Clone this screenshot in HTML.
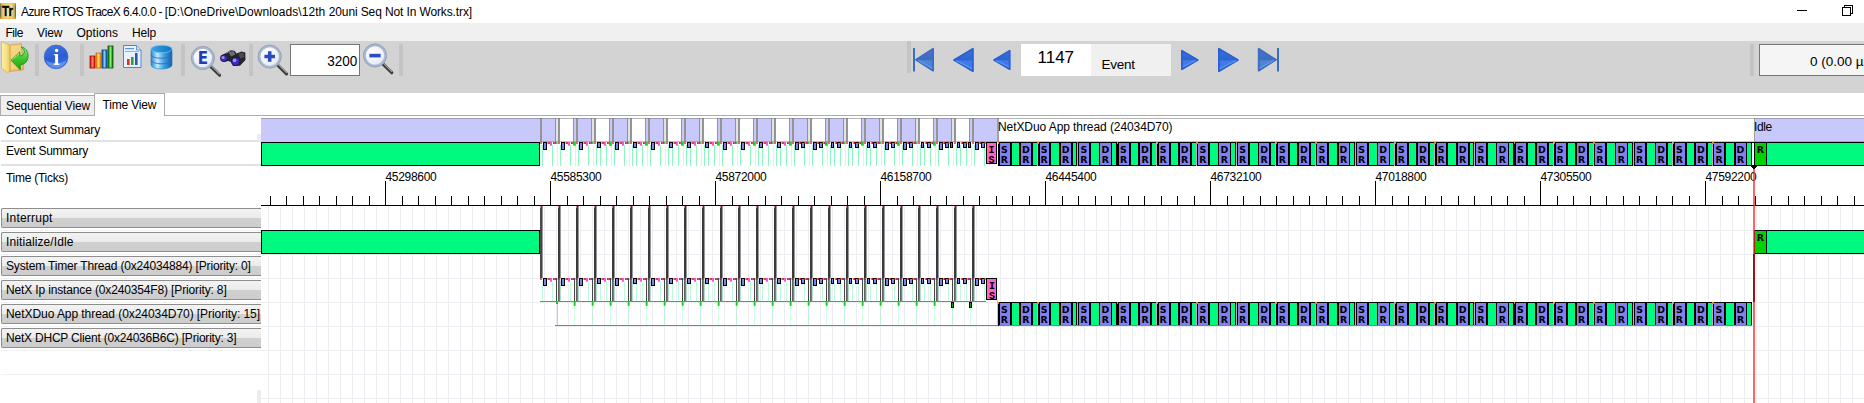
<!DOCTYPE html>
<html><head><meta charset="utf-8"><title>Azure RTOS TraceX</title>
<style>
html,body{margin:0;padding:0;background:#fff;overflow:hidden}
body{width:1864px;height:403px;position:relative;font-family:"Liberation Sans",sans-serif;font-size:12px;color:#000}
.abs{position:absolute;white-space:nowrap}
#title{left:21px;top:5px;line-height:15px}
#ticon{left:0;top:3px;width:16px;height:16px;background:linear-gradient(180deg,rgba(250,185,40,.75) 0,rgba(255,255,255,0) 22%,rgba(255,255,255,0) 80%,rgba(250,170,30,.8) 100%),linear-gradient(90deg,#4e4a3a 0,#bdb06a 10%,#f1eab2 28%,#eee6a8 72%,#c2ad5c 90%,#55503a 100%);overflow:hidden}
#ticon span{position:absolute;left:1.800px;top:0;font:bold 14px "Liberation Sans",sans-serif;letter-spacing:0;line-height:16px;transform:scaleX(.84);transform-origin:0 0;-webkit-text-stroke:.35px #000}
#menubar{left:0;top:23px;width:1864px;height:18px;background:#f0f0f0}
#menubar span{position:absolute;top:3px;line-height:15px}
#toolbar{left:0;top:41px;width:1864px;height:52px;background:#d3d3d3}
.tbox{position:absolute;box-sizing:border-box;top:44px;height:32px}
#zoombox{left:290px;width:70px;background:#fff;border:1px solid #767676}
#zoombox span{position:absolute;right:2px;top:7px;font-size:15px;line-height:17px;transform:scaleX(.9);transform-origin:100% 50%}
#evnum{left:1021px;width:70px;background:#fff}
#evnum span{position:absolute;left:16.500px;top:3.800px;font-size:17px;line-height:20px}
#evlab{left:1091px;width:80px;background:#f0f0f0}
#evlab span{position:absolute;left:10.500px;top:13.400px;font-size:13.500px;line-height:16px}
#rbox{left:1759px;width:120px;background:#f5f5f5;border:1px solid #767676}
#rbox span{position:absolute;left:50px;top:8.500px;font-size:13.500px;line-height:16px}
#tabline{left:0;top:115px;width:1864px;height:1px;background:#acacac}
#tab1{left:0;top:95px;width:95px;height:21px;box-sizing:border-box;background:#efefef;border:1px solid #acacac}
#tab1 span{position:absolute;left:5px;top:3px;line-height:15px}
#tab2{left:94px;top:93px;width:71px;height:23px;box-sizing:border-box;background:#fff;border:1px solid #acacac;border-bottom:none}
#tab2 span{position:absolute;left:7.500px;top:4px;line-height:15px}
.lbl{left:6px;line-height:15px}
.sep{left:1px;width:260px;height:2px;background:#e2e2e2}
.btn{position:absolute;left:1px;width:260px;height:20px;box-sizing:border-box;border:1px solid #8e8e8e;border-right:none;border-radius:2px 0 0 2px;
 background:linear-gradient(#f3f3f3 0,#ebebeb 50%,#d0d0d0 50%,#cdcdcd 100%);overflow:hidden;white-space:nowrap}
.btn span{position:absolute;left:4px;top:1.500px;line-height:15px}
.faint{left:1px;width:260px;height:1px;background:#f1f1f1}
#chart{position:absolute;left:0;top:0}
#ttl{letter-spacing:0}#tt1{letter-spacing:-0.569px}#tt2{letter-spacing:0.069px}#tt3{letter-spacing:-0.119px}#m0{letter-spacing:-0.5px}#m1{letter-spacing:-0.15px}#m2{letter-spacing:0.03px}#m3{letter-spacing:-0.15px}#t1{letter-spacing:-0.12px}#t2{letter-spacing:-0.18px}#l0{letter-spacing:-0.135px}#l1{letter-spacing:-0.26px}#l2{letter-spacing:-0.26px}#b0{letter-spacing:0.21px}#b1{letter-spacing:0.1px}#b2{letter-spacing:-0.17px}#b3{letter-spacing:-0.144px}#b4{letter-spacing:-0.061px}#b5{letter-spacing:-0.205px}#evlab span{letter-spacing:-0.25px}
</style></head><body>
<div class="abs" id="ticon"><span>Tr</span></div>
<div class="abs" id="title"><span id="ttl"><span id="tt1">Azure RTOS TraceX 6.4.0.0 - </span><span id="tt2">[D:\OneDrive\Downloads\12th </span><span id="tt3">20uni Seq Not In Works.trx]</span></span></div>
<svg class="abs" style="left:1790px;top:0" width="74" height="23" viewBox="1790 0 74 23" shape-rendering="crispEdges"><rect x="1797" y="10" width="10" height="1" fill="#000"/><path d="M1842.500 7.500h8v8h-8z M1844.500 7.500v-2h8v8h-2" fill="none" stroke="#000" stroke-width="1"/></svg>
<div class="abs" id="menubar"><span style="left:5.500px" id="m0">File</span><span style="left:37px" id="m1">View</span><span style="left:76.500px" id="m2">Options</span><span style="left:132px" id="m3">Help</span></div>
<div class="abs" id="toolbar"></div>

<svg id="icons" width="1864" height="52" viewBox="0 41 1864 52" style="position:absolute;left:0;top:41px">
<defs>
<linearGradient id="gFold" x1="0" y1="0" x2="1" y2="0"><stop offset="0" stop-color="#fdf2a6"/><stop offset=".6" stop-color="#f6df84"/><stop offset="1" stop-color="#e9c868"/></linearGradient>
<linearGradient id="gFold2" x1="0" y1="0" x2="1" y2="1"><stop offset="0" stop-color="#fad47c"/><stop offset="1" stop-color="#e4b054"/></linearGradient>
<linearGradient id="gArrow" x1="0" y1="0" x2="0" y2="1"><stop offset="0" stop-color="#9aec74"/><stop offset=".55" stop-color="#3cc42c"/><stop offset="1" stop-color="#1aa012"/></linearGradient>
<linearGradient id="gInfo" x1=".3" y1="0" x2=".6" y2="1"><stop offset="0" stop-color="#4274de"/><stop offset=".55" stop-color="#2b5bd2"/><stop offset="1" stop-color="#3a70e4"/></linearGradient>
<linearGradient id="gRed" x1="0" y1="0" x2="1" y2="0"><stop offset="0" stop-color="#c81010"/><stop offset=".5" stop-color="#ff7a5a"/><stop offset="1" stop-color="#c81010"/></linearGradient>
<linearGradient id="gOr" x1="0" y1="0" x2="1" y2="0"><stop offset="0" stop-color="#e87800"/><stop offset=".5" stop-color="#ffd870"/><stop offset="1" stop-color="#e87800"/></linearGradient>
<linearGradient id="gBl" x1="0" y1="0" x2="1" y2="0"><stop offset="0" stop-color="#0a4a9a"/><stop offset=".5" stop-color="#7ccaf5"/><stop offset="1" stop-color="#0a4a9a"/></linearGradient>
<linearGradient id="gGr" x1="0" y1="0" x2="1" y2="0"><stop offset="0" stop-color="#0a6a0a"/><stop offset=".5" stop-color="#7ff070"/><stop offset="1" stop-color="#0a6a0a"/></linearGradient>
<linearGradient id="gDb" x1="0" y1="0" x2="1" y2="0"><stop offset="0" stop-color="#1c8ad2"/><stop offset=".3" stop-color="#bdecff"/><stop offset=".6" stop-color="#3ea6e6"/><stop offset="1" stop-color="#0a62b2"/></linearGradient><linearGradient id="gDbTop" x1="0" y1="0" x2="1" y2="0"><stop offset="0" stop-color="#3aa4e4"/><stop offset="1" stop-color="#0f74c4"/></linearGradient>
<radialGradient id="gLens" cx=".4" cy=".35" r=".75"><stop offset="0" stop-color="#ffffff"/><stop offset=".7" stop-color="#e9eef8"/><stop offset="1" stop-color="#c9d6ea"/></radialGradient>
<linearGradient id="gNav" x1="0" y1="0" x2="0" y2="1"><stop offset="0" stop-color="#3a72dc"/><stop offset=".48" stop-color="#2c64d6"/><stop offset=".56" stop-color="#3f7ce6"/><stop offset="1" stop-color="#3a76e2"/></linearGradient>
<linearGradient id="gNav2" x1="0" y1="0" x2="0" y2="1"><stop offset="0" stop-color="#4a78c8"/><stop offset=".48" stop-color="#3d6cc0"/><stop offset=".56" stop-color="#4f84d6"/><stop offset="1" stop-color="#4a80d2"/></linearGradient>
<g id="mag">
 <path d="M7.500 8 L16.800 17.200" stroke="#3c3c40" stroke-width="3.200" stroke-linecap="round"/>
 <path d="M8.300 7.600 L16.800 16" stroke="#a4a4a8" stroke-width="1.100" stroke-linecap="round"/>
 <circle cx="0" cy="0" r="10.5" fill="url(#gLens)" stroke="#a9b8cf" stroke-width="2.4"/>
 <circle cx="0" cy="0" r="11.6" fill="none" stroke="#8b97aa" stroke-width=".7"/>
</g>
</defs>
<!-- separators -->
<g fill="#c4c4c4">
<rect x="35" y="44" width="4" height="32"/><rect x="80" y="44" width="4" height="32"/><rect x="181" y="44" width="4" height="32"/>
<rect x="249" y="44" width="4" height="32"/><rect x="399" y="44" width="4" height="32"/><rect x="907" y="41" width="4" height="32"/><rect x="1750" y="44" width="4" height="32"/>
</g>
<!-- folder -->
<path d="M9.900 45 L21.500 43.500 L23.800 69.800 L9.900 71.500 Z" fill="url(#gFold2)" stroke="#c79a3e" stroke-width=".6"/>
<path d="M11 46.500 L20.600 45.300 L22 68 L11 69.400 Z" fill="#f7d98a" opacity=".7"/>
<path d="M1.500 41.600 L9.900 45 L9.900 71.300 L7.400 72.900 L1.500 67.800 Z" fill="url(#gFold)" stroke="#c9a548" stroke-width=".6"/>
<path d="M11.100 60.300 L19.850 51.900 L19.850 55.900 C22.500 56 24.600 54 24.300 51 C24.100 49.800 23.300 48.900 22.300 48.400 L21.300 47 C25 47.300 28.100 51 28.100 55.900 C28.100 61 25 64.300 20.300 64.800 L20.300 69.800 Z" fill="url(#gArrow)" stroke="#128c0c" stroke-width=".8" stroke-linejoin="round"/>
<path d="M12.500 59.700 L19.300 53.200" stroke="#eaffe2" stroke-width=".9" stroke-dasharray="1.200 .700" fill="none"/>
<!-- info -->
<circle cx="56.100" cy="56.900" r="11.900" fill="url(#gInfo)" stroke="#3a66d0" stroke-width=".7"/>
<path d="M45.500 60 A11 11 0 0 0 66.700 60 A14 9 0 0 1 45.500 60Z" fill="#7fb0ff" opacity=".55"/>
<circle cx="56.600" cy="50.400" r="1.750" fill="#fff"/>
<path d="M53.900 53.900h4.200v9.700h1.200v1.300h-5.500v-1.300h1.300v-8.300h-1.200z" fill="#fff"/>
<!-- bar chart -->
<rect x="90" y="56" width="5" height="12" fill="url(#gRed)" stroke="#a00808" stroke-width=".8"/>
<rect x="96" y="53" width="5" height="15" fill="url(#gOr)" stroke="#d06800" stroke-width=".8"/>
<rect x="102" y="50" width="5" height="18" fill="url(#gBl)" stroke="#083a80" stroke-width=".8"/>
<rect x="108" y="46" width="5" height="22" fill="url(#gGr)" stroke="#065006" stroke-width=".8"/>
<!-- doc -->
<path d="M123.5 45.5h13l4.5 4.5v17.5h-17.5z" fill="#e8f2ff" stroke="#4a86d8" stroke-width="1"/>
<path d="M136.5 45.5v4.5h4.5" fill="#cfe2fa" stroke="#4a86d8" stroke-width=".8"/>
<rect x="125" y="48" width="9" height="1.2" fill="#5a96e0"/><rect x="125" y="51" width="14" height="1" fill="#8ab6ee"/>
<rect x="127" y="59" width="2.6" height="6" fill="#e03020"/><rect x="131" y="57" width="2.6" height="8" fill="#30a030"/><rect x="135" y="53" width="2.6" height="12" fill="#2a5ab0"/>
<!-- database -->
<path d="M151 49 v16 a10.500 4 0 0 0 21 0 v-16z" fill="url(#gDb)" stroke="#1f78c0" stroke-width=".6"/>
<ellipse cx="161.500" cy="49" rx="10.500" ry="3.800" fill="url(#gDbTop)" stroke="#7cc8f2" stroke-width=".7"/>
<path d="M151 54.500 a10.500 3.800 0 0 0 21 0" fill="none" stroke="#5a5ab0" stroke-width=".9"/>
<path d="M151 60 a10.500 3.800 0 0 0 21 0" fill="none" stroke="#5a5ab0" stroke-width=".9"/>
<!-- magnifier E -->
<use href="#mag" x="202.800" y="58"/>
<text transform="translate(202.900 64.300) scale(.86 1)" text-anchor="middle" style="font:bold 17.600px 'DejaVu Sans','Liberation Sans',sans-serif;fill:#1f3cb4">E</text>
<!-- binoculars -->
<path d="M221.500 55.500 L230.500 50.300 L234.500 50.800 L236.500 53.500 L241.500 51.500 L245.300 52.500 L245.500 60 L240 65.800 L233 66 L231 62 L228 61 L224 62 L221 60 Z" fill="#26262a"/>
<path d="M228.500 52 L233.500 51 L235.500 54.500 L231 56.500 Z" fill="#6a6a72"/>
<path d="M238.500 53.500 L243.500 52.500 L244.500 57 L240 58.500 Z" fill="#4a4a52"/>
<path d="M226 53.300 L230.500 50.600" stroke="#9a9aa2" stroke-width=".8"/>
<circle cx="223.900" cy="58.200" r="3.500" fill="#3a2cb8" stroke="#15103a" stroke-width=".7"/><circle cx="223.100" cy="57.400" r="1.500" fill="#9a92f4"/>
<circle cx="235.600" cy="61.400" r="4.200" fill="#3a2cb8" stroke="#15103a" stroke-width=".7"/><circle cx="234.600" cy="60.400" r="1.800" fill="#9a92f4"/>
<!-- magnifier + -->
<use href="#mag" x="269.700" y="56.600"/>
<path d="M264.400 54.700h3.500v-3.500h3.600v3.500h3.500v3.600h-3.500v3.500h-3.600v-3.500h-3.500z" fill="#2a4cc0"/>
<!-- magnifier - -->
<use href="#mag" x="375" y="55.500"/>
<rect x="369.400" y="53.800" width="11.200" height="3.600" fill="#2a4cc0"/>
<!-- nav buttons -->
<rect x="913" y="48" width="2" height="23.500" fill="#3a6cc4"/>
<path d="M916.000 59.750 L933.100 48.800 V70.700 Z" fill="url(#gNav2)" stroke="#3c6cc2" stroke-width="1.800" stroke-linejoin="round"/><path d="M918.500 60.550 L931.800 68.000" stroke="#7fb4ff" stroke-width="1.200" stroke-linecap="round" opacity=".55"/>
<path d="M954.000 60.000 L972.900 48.800 V71.200 Z" fill="url(#gNav)" stroke="#2a60d2" stroke-width="1.800" stroke-linejoin="round"/><path d="M956.500 60.800 L971.600 68.500" stroke="#7fb4ff" stroke-width="1.200" stroke-linecap="round" opacity=".55"/>
<path d="M994.000 60.000 L1009.700 50.800 V69.200 Z" fill="url(#gNav)" stroke="#2a60d2" stroke-width="1.800" stroke-linejoin="round"/><path d="M996.500 60.800 L1008.400 66.500" stroke="#7fb4ff" stroke-width="1.200" stroke-linecap="round" opacity=".55"/>
<path d="M1197.800 60.000 L1181.900 50.800 V69.200 Z" fill="url(#gNav)" stroke="#2a60d2" stroke-width="1.800" stroke-linejoin="round"/><path d="M1195.300 60.800 L1183.200 66.500" stroke="#7fb4ff" stroke-width="1.200" stroke-linecap="round" opacity=".55"/>
<path d="M1238.000 60.000 L1218.900 48.800 V71.200 Z" fill="url(#gNav)" stroke="#2a60d2" stroke-width="1.800" stroke-linejoin="round"/><path d="M1235.500 60.800 L1220.200 68.500" stroke="#7fb4ff" stroke-width="1.200" stroke-linecap="round" opacity=".55"/>
<path d="M1276.000 59.750 L1258.700 48.800 V70.700 Z" fill="url(#gNav2)" stroke="#3c6cc2" stroke-width="1.800" stroke-linejoin="round"/><path d="M1273.500 60.550 L1260.000 68.000" stroke="#7fb4ff" stroke-width="1.200" stroke-linecap="round" opacity=".55"/>
<rect x="1277" y="48" width="2" height="23.500" fill="#3a6cc4"/>
</svg>

<div class="tbox" id="zoombox"><span>3200</span></div>
<div class="tbox" id="evnum"><span>1147</span></div>
<div class="tbox" id="evlab"><span>Event</span></div>
<div class="tbox" id="rbox"><span>0 (0.00 µs)</span></div>
<div class="abs" id="tabline"></div>
<div class="abs" id="tab1"><span id="t1">Sequential View</span></div>
<div class="abs" id="tab2"><span id="t2">Time View</span></div>
<div class="abs lbl" style="top:123px"><span id="l0">Context Summary</span></div>
<div class="abs sep" style="top:140px"></div>
<div class="abs lbl" style="top:144px"><span id="l1">Event Summary</span></div>
<div class="abs sep" style="top:164px"></div>
<div class="abs lbl" style="top:171px"><span id="l2">Time (Ticks)</span></div>
<div class="abs faint" style="top:230px"></div><div class="abs faint" style="top:254px"></div><div class="abs faint" style="top:278px"></div>
<div class="abs faint" style="top:302px"></div><div class="abs faint" style="top:326px"></div><div class="abs faint" style="top:350px"></div><div class="abs faint" style="top:374px"></div>
<div class="btn" style="top:208px"><span id="b0">Interrupt</span></div><div class="btn" style="top:232px"><span id="b1">Initialize/Idle</span></div><div class="btn" style="top:256px"><span id="b2">System Timer Thread (0x24034884) [Priority: 0]</span></div><div class="btn" style="top:280px"><span id="b3">NetX Ip instance (0x240354F8) [Priority: 8]</span></div><div class="btn" style="top:304px"><span id="b4">NetXDuo App thread (0x24034D70) [Priority: 15]</span></div><div class="btn" style="top:328px"><span id="b5">NetX DHCP Client (0x24036B6C) [Priority: 3]</span></div>
<div class="abs" style="left:257px;top:134px;width:4px;height:7px;background:#ececec"></div>
<div class="abs" style="left:257px;top:390px;width:4px;height:13px;background:#ececec"></div>
<svg id="chart" width="1864" height="403" viewBox="0 0 1864 403" shape-rendering="crispEdges">
<defs><clipPath id="cpA"><rect x="986" y="142" width="11" height="21"/></clipPath><clipPath id="cpB"><rect x="986" y="278" width="12" height="21"/></clipPath></defs>
<style>
.bl{font:bold 9.4px "DejaVu Sans","Liberation Sans",sans-serif;text-anchor:middle;fill:#000}
.bm{font:bold 10px "Liberation Mono","DejaVu Sans Mono",monospace;text-anchor:middle;fill:#000}
.rl{font:12px "Liberation Sans",sans-serif;letter-spacing:-0.3px;fill:#000}
.cl{font:12px "Liberation Sans",sans-serif;fill:#000}
</style>
<g><rect x="268" y="206" width="1" height="197" fill="#ecedf0"/><rect x="280" y="206" width="1" height="197" fill="#ecedf0"/><rect x="292" y="206" width="1" height="197" fill="#ecedf0"/><rect x="304" y="206" width="1" height="197" fill="#ecedf0"/><rect x="316" y="206" width="1" height="197" fill="#ecedf0"/><rect x="328" y="206" width="1" height="197" fill="#ecedf0"/><rect x="340" y="206" width="1" height="197" fill="#ecedf0"/><rect x="352" y="206" width="1" height="197" fill="#ecedf0"/><rect x="364" y="206" width="1" height="197" fill="#ecedf0"/><rect x="376" y="206" width="1" height="197" fill="#ecedf0"/><rect x="388" y="206" width="1" height="197" fill="#ecedf0"/><rect x="400" y="206" width="1" height="197" fill="#ecedf0"/><rect x="412" y="206" width="1" height="197" fill="#ecedf0"/><rect x="424" y="206" width="1" height="197" fill="#ecedf0"/><rect x="436" y="206" width="1" height="197" fill="#ecedf0"/><rect x="448" y="206" width="1" height="197" fill="#ecedf0"/><rect x="460" y="206" width="1" height="197" fill="#ecedf0"/><rect x="472" y="206" width="1" height="197" fill="#ecedf0"/><rect x="484" y="206" width="1" height="197" fill="#ecedf0"/><rect x="496" y="206" width="1" height="197" fill="#ecedf0"/><rect x="508" y="206" width="1" height="197" fill="#ecedf0"/><rect x="520" y="206" width="1" height="197" fill="#ecedf0"/><rect x="532" y="206" width="1" height="197" fill="#ecedf0"/><rect x="544" y="206" width="1" height="197" fill="#ecedf0"/><rect x="556" y="206" width="1" height="197" fill="#ecedf0"/><rect x="568" y="206" width="1" height="197" fill="#ecedf0"/><rect x="580" y="206" width="1" height="197" fill="#ecedf0"/><rect x="592" y="206" width="1" height="197" fill="#ecedf0"/><rect x="604" y="206" width="1" height="197" fill="#ecedf0"/><rect x="616" y="206" width="1" height="197" fill="#ecedf0"/><rect x="628" y="206" width="1" height="197" fill="#ecedf0"/><rect x="640" y="206" width="1" height="197" fill="#ecedf0"/><rect x="652" y="206" width="1" height="197" fill="#ecedf0"/><rect x="664" y="206" width="1" height="197" fill="#ecedf0"/><rect x="676" y="206" width="1" height="197" fill="#ecedf0"/><rect x="688" y="206" width="1" height="197" fill="#ecedf0"/><rect x="700" y="206" width="1" height="197" fill="#ecedf0"/><rect x="712" y="206" width="1" height="197" fill="#ecedf0"/><rect x="724" y="206" width="1" height="197" fill="#ecedf0"/><rect x="736" y="206" width="1" height="197" fill="#ecedf0"/><rect x="748" y="206" width="1" height="197" fill="#ecedf0"/><rect x="760" y="206" width="1" height="197" fill="#ecedf0"/><rect x="772" y="206" width="1" height="197" fill="#ecedf0"/><rect x="784" y="206" width="1" height="197" fill="#ecedf0"/><rect x="796" y="206" width="1" height="197" fill="#ecedf0"/><rect x="808" y="206" width="1" height="197" fill="#ecedf0"/><rect x="820" y="206" width="1" height="197" fill="#ecedf0"/><rect x="832" y="206" width="1" height="197" fill="#ecedf0"/><rect x="844" y="206" width="1" height="197" fill="#ecedf0"/><rect x="856" y="206" width="1" height="197" fill="#ecedf0"/><rect x="868" y="206" width="1" height="197" fill="#ecedf0"/><rect x="880" y="206" width="1" height="197" fill="#ecedf0"/><rect x="892" y="206" width="1" height="197" fill="#ecedf0"/><rect x="904" y="206" width="1" height="197" fill="#ecedf0"/><rect x="916" y="206" width="1" height="197" fill="#ecedf0"/><rect x="928" y="206" width="1" height="197" fill="#ecedf0"/><rect x="940" y="206" width="1" height="197" fill="#ecedf0"/><rect x="952" y="206" width="1" height="197" fill="#ecedf0"/><rect x="964" y="206" width="1" height="197" fill="#ecedf0"/><rect x="976" y="206" width="1" height="197" fill="#ecedf0"/><rect x="988" y="206" width="1" height="197" fill="#ecedf0"/><rect x="1000" y="206" width="1" height="197" fill="#ecedf0"/><rect x="1012" y="206" width="1" height="197" fill="#ecedf0"/><rect x="1024" y="206" width="1" height="197" fill="#ecedf0"/><rect x="1036" y="206" width="1" height="197" fill="#ecedf0"/><rect x="1048" y="206" width="1" height="197" fill="#ecedf0"/><rect x="1060" y="206" width="1" height="197" fill="#ecedf0"/><rect x="1072" y="206" width="1" height="197" fill="#ecedf0"/><rect x="1084" y="206" width="1" height="197" fill="#ecedf0"/><rect x="1096" y="206" width="1" height="197" fill="#ecedf0"/><rect x="1108" y="206" width="1" height="197" fill="#ecedf0"/><rect x="1120" y="206" width="1" height="197" fill="#ecedf0"/><rect x="1132" y="206" width="1" height="197" fill="#ecedf0"/><rect x="1144" y="206" width="1" height="197" fill="#ecedf0"/><rect x="1156" y="206" width="1" height="197" fill="#ecedf0"/><rect x="1168" y="206" width="1" height="197" fill="#ecedf0"/><rect x="1180" y="206" width="1" height="197" fill="#ecedf0"/><rect x="1192" y="206" width="1" height="197" fill="#ecedf0"/><rect x="1204" y="206" width="1" height="197" fill="#ecedf0"/><rect x="1216" y="206" width="1" height="197" fill="#ecedf0"/><rect x="1228" y="206" width="1" height="197" fill="#ecedf0"/><rect x="1240" y="206" width="1" height="197" fill="#ecedf0"/><rect x="1252" y="206" width="1" height="197" fill="#ecedf0"/><rect x="1264" y="206" width="1" height="197" fill="#ecedf0"/><rect x="1276" y="206" width="1" height="197" fill="#ecedf0"/><rect x="1288" y="206" width="1" height="197" fill="#ecedf0"/><rect x="1300" y="206" width="1" height="197" fill="#ecedf0"/><rect x="1312" y="206" width="1" height="197" fill="#ecedf0"/><rect x="1324" y="206" width="1" height="197" fill="#ecedf0"/><rect x="1336" y="206" width="1" height="197" fill="#ecedf0"/><rect x="1348" y="206" width="1" height="197" fill="#ecedf0"/><rect x="1360" y="206" width="1" height="197" fill="#ecedf0"/><rect x="1372" y="206" width="1" height="197" fill="#ecedf0"/><rect x="1384" y="206" width="1" height="197" fill="#ecedf0"/><rect x="1396" y="206" width="1" height="197" fill="#ecedf0"/><rect x="1408" y="206" width="1" height="197" fill="#ecedf0"/><rect x="1420" y="206" width="1" height="197" fill="#ecedf0"/><rect x="1432" y="206" width="1" height="197" fill="#ecedf0"/><rect x="1444" y="206" width="1" height="197" fill="#ecedf0"/><rect x="1456" y="206" width="1" height="197" fill="#ecedf0"/><rect x="1468" y="206" width="1" height="197" fill="#ecedf0"/><rect x="1480" y="206" width="1" height="197" fill="#ecedf0"/><rect x="1492" y="206" width="1" height="197" fill="#ecedf0"/><rect x="1504" y="206" width="1" height="197" fill="#ecedf0"/><rect x="1516" y="206" width="1" height="197" fill="#ecedf0"/><rect x="1528" y="206" width="1" height="197" fill="#ecedf0"/><rect x="1540" y="206" width="1" height="197" fill="#ecedf0"/><rect x="1552" y="206" width="1" height="197" fill="#ecedf0"/><rect x="1564" y="206" width="1" height="197" fill="#ecedf0"/><rect x="1576" y="206" width="1" height="197" fill="#ecedf0"/><rect x="1588" y="206" width="1" height="197" fill="#ecedf0"/><rect x="1600" y="206" width="1" height="197" fill="#ecedf0"/><rect x="1612" y="206" width="1" height="197" fill="#ecedf0"/><rect x="1624" y="206" width="1" height="197" fill="#ecedf0"/><rect x="1636" y="206" width="1" height="197" fill="#ecedf0"/><rect x="1648" y="206" width="1" height="197" fill="#ecedf0"/><rect x="1660" y="206" width="1" height="197" fill="#ecedf0"/><rect x="1672" y="206" width="1" height="197" fill="#ecedf0"/><rect x="1684" y="206" width="1" height="197" fill="#ecedf0"/><rect x="1696" y="206" width="1" height="197" fill="#ecedf0"/><rect x="1708" y="206" width="1" height="197" fill="#ecedf0"/><rect x="1720" y="206" width="1" height="197" fill="#ecedf0"/><rect x="1732" y="206" width="1" height="197" fill="#ecedf0"/><rect x="1744" y="206" width="1" height="197" fill="#ecedf0"/><rect x="1756" y="206" width="1" height="197" fill="#ecedf0"/><rect x="1768" y="206" width="1" height="197" fill="#ecedf0"/><rect x="1780" y="206" width="1" height="197" fill="#ecedf0"/><rect x="1792" y="206" width="1" height="197" fill="#ecedf0"/><rect x="1804" y="206" width="1" height="197" fill="#ecedf0"/><rect x="1816" y="206" width="1" height="197" fill="#ecedf0"/><rect x="1828" y="206" width="1" height="197" fill="#ecedf0"/><rect x="1840" y="206" width="1" height="197" fill="#ecedf0"/><rect x="1852" y="206" width="1" height="197" fill="#ecedf0"/><rect x="261" y="230" width="1603" height="1" fill="#ecedf0"/><rect x="261" y="254" width="1603" height="1" fill="#ecedf0"/><rect x="261" y="278" width="1603" height="1" fill="#ecedf0"/><rect x="261" y="302" width="1603" height="1" fill="#ecedf0"/><rect x="261" y="326" width="1603" height="1" fill="#ecedf0"/><rect x="261" y="350" width="1603" height="1" fill="#ecedf0"/><rect x="261" y="374" width="1603" height="1" fill="#ecedf0"/><rect x="261" y="398" width="1603" height="1" fill="#ecedf0"/></g><g><rect x="261" y="118" width="279" height="24" fill="#c8c8fa"/><rect x="540" y="118" width="1.7" height="24" fill="#949494"/><rect x="541.7" y="118" width="13.7" height="24" fill="#c8c8fa"/><rect x="555.4" y="118" width="0.9" height="24" fill="#949494"/><rect x="556.3" y="118" width="2" height="24" fill="#e2e2e2"/><rect x="558.3" y="118" width="1.5" height="24" fill="#949494"/><rect x="573" y="118" width="0.9" height="24" fill="#949494"/><rect x="573.9" y="118" width="2.1" height="24" fill="#c8c8fa"/><rect x="576" y="118" width="1.7" height="24" fill="#949494"/><rect x="577.7" y="118" width="13.7" height="24" fill="#c8c8fa"/><rect x="591.4" y="118" width="0.9" height="24" fill="#949494"/><rect x="592.3" y="118" width="2" height="24" fill="#e2e2e2"/><rect x="594.3" y="118" width="1.5" height="24" fill="#949494"/><rect x="609" y="118" width="0.9" height="24" fill="#949494"/><rect x="609.9" y="118" width="2.1" height="24" fill="#c8c8fa"/><rect x="612" y="118" width="1.7" height="24" fill="#949494"/><rect x="613.7" y="118" width="13.7" height="24" fill="#c8c8fa"/><rect x="627.4" y="118" width="0.9" height="24" fill="#949494"/><rect x="628.3" y="118" width="2" height="24" fill="#e2e2e2"/><rect x="630.3" y="118" width="1.5" height="24" fill="#949494"/><rect x="645" y="118" width="0.9" height="24" fill="#949494"/><rect x="645.9" y="118" width="2.1" height="24" fill="#c8c8fa"/><rect x="648" y="118" width="1.7" height="24" fill="#949494"/><rect x="649.7" y="118" width="13.7" height="24" fill="#c8c8fa"/><rect x="663.4" y="118" width="0.9" height="24" fill="#949494"/><rect x="664.3" y="118" width="2" height="24" fill="#e2e2e2"/><rect x="666.3" y="118" width="1.5" height="24" fill="#949494"/><rect x="681" y="118" width="0.9" height="24" fill="#949494"/><rect x="681.9" y="118" width="2.1" height="24" fill="#c8c8fa"/><rect x="684" y="118" width="1.7" height="24" fill="#949494"/><rect x="685.7" y="118" width="13.7" height="24" fill="#c8c8fa"/><rect x="699.4" y="118" width="0.9" height="24" fill="#949494"/><rect x="700.3" y="118" width="2" height="24" fill="#e2e2e2"/><rect x="702.3" y="118" width="1.5" height="24" fill="#949494"/><rect x="717" y="118" width="0.9" height="24" fill="#949494"/><rect x="717.9" y="118" width="2.1" height="24" fill="#c8c8fa"/><rect x="720" y="118" width="1.7" height="24" fill="#949494"/><rect x="721.7" y="118" width="13.7" height="24" fill="#c8c8fa"/><rect x="735.4" y="118" width="0.9" height="24" fill="#949494"/><rect x="736.3" y="118" width="2" height="24" fill="#e2e2e2"/><rect x="738.3" y="118" width="1.5" height="24" fill="#949494"/><rect x="753" y="118" width="0.9" height="24" fill="#949494"/><rect x="753.9" y="118" width="2.1" height="24" fill="#c8c8fa"/><rect x="756" y="118" width="1.7" height="24" fill="#949494"/><rect x="757.7" y="118" width="13.7" height="24" fill="#c8c8fa"/><rect x="771.4" y="118" width="0.9" height="24" fill="#949494"/><rect x="772.3" y="118" width="2" height="24" fill="#e2e2e2"/><rect x="774.3" y="118" width="1.5" height="24" fill="#949494"/><rect x="789" y="118" width="0.9" height="24" fill="#949494"/><rect x="789.9" y="118" width="2.1" height="24" fill="#c8c8fa"/><rect x="792" y="118" width="1.7" height="24" fill="#949494"/><rect x="793.7" y="118" width="13.7" height="24" fill="#c8c8fa"/><rect x="807.4" y="118" width="0.9" height="24" fill="#949494"/><rect x="808.3" y="118" width="2" height="24" fill="#e2e2e2"/><rect x="810.3" y="118" width="1.5" height="24" fill="#949494"/><rect x="825" y="118" width="0.9" height="24" fill="#949494"/><rect x="825.9" y="118" width="2.1" height="24" fill="#c8c8fa"/><rect x="828" y="118" width="1.7" height="24" fill="#949494"/><rect x="829.7" y="118" width="13.7" height="24" fill="#c8c8fa"/><rect x="843.4" y="118" width="0.9" height="24" fill="#949494"/><rect x="844.3" y="118" width="2" height="24" fill="#e2e2e2"/><rect x="846.3" y="118" width="1.5" height="24" fill="#949494"/><rect x="861" y="118" width="0.9" height="24" fill="#949494"/><rect x="861.9" y="118" width="2.1" height="24" fill="#c8c8fa"/><rect x="864" y="118" width="1.7" height="24" fill="#949494"/><rect x="865.7" y="118" width="13.7" height="24" fill="#c8c8fa"/><rect x="879.4" y="118" width="0.9" height="24" fill="#949494"/><rect x="880.3" y="118" width="2" height="24" fill="#e2e2e2"/><rect x="882.3" y="118" width="1.5" height="24" fill="#949494"/><rect x="897" y="118" width="0.9" height="24" fill="#949494"/><rect x="897.9" y="118" width="2.1" height="24" fill="#c8c8fa"/><rect x="900" y="118" width="1.7" height="24" fill="#949494"/><rect x="901.7" y="118" width="13.7" height="24" fill="#c8c8fa"/><rect x="915.4" y="118" width="0.9" height="24" fill="#949494"/><rect x="916.3" y="118" width="2" height="24" fill="#e2e2e2"/><rect x="918.3" y="118" width="1.5" height="24" fill="#949494"/><rect x="933" y="118" width="0.9" height="24" fill="#949494"/><rect x="933.9" y="118" width="2.1" height="24" fill="#c8c8fa"/><rect x="936" y="118" width="1.7" height="24" fill="#949494"/><rect x="937.7" y="118" width="13.7" height="24" fill="#c8c8fa"/><rect x="951.4" y="118" width="0.9" height="24" fill="#949494"/><rect x="952.3" y="118" width="2" height="24" fill="#e2e2e2"/><rect x="954.3" y="118" width="1.5" height="24" fill="#949494"/><rect x="969" y="118" width="0.9" height="24" fill="#949494"/><rect x="969.9" y="118" width="2.1" height="24" fill="#c8c8fa"/><rect x="972" y="118" width="1.7" height="24" fill="#949494"/><rect x="973.7" y="118" width="23.2" height="24" fill="#c8c8fa"/><rect x="996.9" y="118" width="1.8" height="24" fill="#a2a2a2"/><rect x="1755" y="118" width="109" height="24" fill="#c8c8fa"/><rect x="1753.5" y="118" width="1.5" height="24" fill="#a2a2a2"/><rect x="261" y="118" width="1603" height="1" fill="rgba(120,120,130,.55)"/><rect x="540" y="141" width="1324" height="1" fill="rgba(120,120,130,.45)"/></g><g><rect x="261" y="142" width="279" height="24" fill="#000"/><rect x="262" y="143" width="277" height="22" fill="#00fa80"/><rect x="542" y="145" width="1" height="21" fill="rgba(0,240,120,0.45)"/><rect x="552" y="145" width="1" height="21" fill="rgba(0,240,120,0.45)"/><rect x="557" y="145" width="1" height="21" fill="rgba(0,240,120,0.2)"/><rect x="543.2" y="142" width="4.1" height="7.8" fill="#000"/><rect x="544.2" y="143" width="2.1" height="5.8" fill="#8080f0"/><g shape-rendering="geometricPrecision"><rect x="540.1" y="142" width="1.8" height="2" fill="#e8507c"/><rect x="547.4" y="142" width="0.9" height="2" fill="#ff8000"/><rect x="548.3" y="142" width="1.5" height="2" fill="#b01030"/><rect x="549.9" y="142" width="2.1" height="3.7" fill="#ff54c8"/><rect x="553" y="142" width="1.7" height="2" fill="#d02090"/><rect x="554.7" y="142" width="1.2" height="2" fill="#c02040"/><rect x="555.9" y="142" width="1.7" height="2" fill="#30d030"/></g><rect x="560" y="145" width="1" height="21" fill="rgba(0,240,120,0.45)"/><rect x="570" y="145" width="1" height="21" fill="rgba(0,240,120,0.45)"/><rect x="575" y="145" width="1" height="21" fill="rgba(0,240,120,0.2)"/><rect x="561.2" y="142" width="4.1" height="7.8" fill="#000"/><rect x="562.2" y="143" width="2.1" height="5.8" fill="#8080f0"/><g shape-rendering="geometricPrecision"><rect x="558.1" y="142" width="1.8" height="2" fill="#e8507c"/><rect x="565.4" y="142" width="0.9" height="2" fill="#ff8000"/><rect x="566.3" y="142" width="1.5" height="2" fill="#b01030"/><rect x="567.9" y="142" width="2.1" height="3.7" fill="#ff54c8"/><rect x="571" y="142" width="1.7" height="2" fill="#d02090"/><rect x="572.7" y="142" width="1.2" height="2" fill="#c02040"/><rect x="573.1" y="142" width="2.7" height="3.7" fill="#00e000"/></g><rect x="578" y="145" width="1" height="21" fill="rgba(0,240,120,0.45)"/><rect x="588" y="145" width="1" height="21" fill="rgba(0,240,120,0.45)"/><rect x="593" y="145" width="1" height="21" fill="rgba(0,240,120,0.2)"/><rect x="579.2" y="142" width="4.1" height="7.8" fill="#000"/><rect x="580.2" y="143" width="2.1" height="5.8" fill="#8080f0"/><g shape-rendering="geometricPrecision"><rect x="576.1" y="142" width="1.8" height="2" fill="#e8507c"/><rect x="583.4" y="142" width="0.9" height="2" fill="#ff8000"/><rect x="584.3" y="142" width="1.5" height="2" fill="#b01030"/><rect x="585.9" y="142" width="2.1" height="3.7" fill="#ff54c8"/><rect x="589" y="142" width="1.7" height="2" fill="#d02090"/><rect x="590.7" y="142" width="1.2" height="2" fill="#c02040"/><rect x="591.9" y="142" width="1.7" height="2" fill="#30d030"/></g><rect x="596" y="145" width="1" height="21" fill="rgba(0,240,120,0.45)"/><rect x="606" y="145" width="1" height="21" fill="rgba(0,240,120,0.45)"/><rect x="611" y="145" width="1" height="21" fill="rgba(0,240,120,0.2)"/><rect x="600" y="145" width="1" height="21" fill="rgba(0,240,120,0.45)"/><rect x="597.2" y="142" width="3.3" height="6" fill="#000"/><rect x="598.2" y="143" width="1.3" height="4" fill="#8080f0"/><g shape-rendering="geometricPrecision"><rect x="594.1" y="142" width="1.8" height="2" fill="#e8507c"/><rect x="601.4" y="142" width="0.9" height="2" fill="#ff8000"/><rect x="602.3" y="142" width="1.5" height="2" fill="#b01030"/><rect x="603.9" y="142" width="2.1" height="3.7" fill="#ff54c8"/><rect x="607" y="142" width="1.7" height="2" fill="#d02090"/><rect x="608.7" y="142" width="1.2" height="2" fill="#c02040"/><rect x="609.1" y="142" width="2.7" height="3.7" fill="#00e000"/></g><rect x="614" y="145" width="1" height="21" fill="rgba(0,240,120,0.45)"/><rect x="624" y="145" width="1" height="21" fill="rgba(0,240,120,0.45)"/><rect x="629" y="145" width="1" height="21" fill="rgba(0,240,120,0.2)"/><rect x="615.2" y="142" width="4.1" height="7.8" fill="#000"/><rect x="616.2" y="143" width="2.1" height="5.8" fill="#8080f0"/><g shape-rendering="geometricPrecision"><rect x="612.1" y="142" width="1.8" height="2" fill="#e8507c"/><rect x="619.4" y="142" width="0.9" height="2" fill="#ff8000"/><rect x="620.3" y="142" width="1.5" height="2" fill="#b01030"/><rect x="621.9" y="142" width="2.1" height="3.7" fill="#ff54c8"/><rect x="625" y="142" width="1.7" height="2" fill="#d02090"/><rect x="626.7" y="142" width="1.2" height="2" fill="#c02040"/><rect x="627.9" y="142" width="1.7" height="2" fill="#30d030"/></g><rect x="632" y="145" width="1" height="21" fill="rgba(0,240,120,0.45)"/><rect x="642" y="145" width="1" height="21" fill="rgba(0,240,120,0.45)"/><rect x="647" y="145" width="1" height="21" fill="rgba(0,240,120,0.2)"/><rect x="636" y="145" width="1" height="21" fill="rgba(0,240,120,0.45)"/><rect x="633.2" y="142" width="3.3" height="6" fill="#000"/><rect x="634.2" y="143" width="1.3" height="4" fill="#8080f0"/><g shape-rendering="geometricPrecision"><rect x="630.1" y="142" width="1.8" height="2" fill="#e8507c"/><rect x="637.4" y="142" width="0.9" height="2" fill="#ff8000"/><rect x="638.3" y="142" width="1.5" height="2" fill="#b01030"/><rect x="639.9" y="142" width="2.1" height="3.7" fill="#ff54c8"/><rect x="643" y="142" width="1.7" height="2" fill="#d02090"/><rect x="644.7" y="142" width="1.2" height="2" fill="#c02040"/><rect x="645.1" y="142" width="2.7" height="3.7" fill="#00e000"/></g><rect x="650" y="145" width="1" height="21" fill="rgba(0,240,120,0.45)"/><rect x="660" y="145" width="1" height="21" fill="rgba(0,240,120,0.45)"/><rect x="665" y="145" width="1" height="21" fill="rgba(0,240,120,0.2)"/><rect x="651.2" y="142" width="4.1" height="7.8" fill="#000"/><rect x="652.2" y="143" width="2.1" height="5.8" fill="#8080f0"/><g shape-rendering="geometricPrecision"><rect x="648.1" y="142" width="1.8" height="2" fill="#e8507c"/><rect x="655.4" y="142" width="0.9" height="2" fill="#ff8000"/><rect x="656.3" y="142" width="1.5" height="2" fill="#b01030"/><rect x="657.9" y="142" width="2.1" height="3.7" fill="#ff54c8"/><rect x="661" y="142" width="1.7" height="2" fill="#d02090"/><rect x="662.7" y="142" width="1.2" height="2" fill="#c02040"/><rect x="663.9" y="142" width="1.7" height="2" fill="#30d030"/></g><rect x="668" y="145" width="1" height="21" fill="rgba(0,240,120,0.45)"/><rect x="678" y="145" width="1" height="21" fill="rgba(0,240,120,0.45)"/><rect x="683" y="145" width="1" height="21" fill="rgba(0,240,120,0.2)"/><rect x="672" y="145" width="1" height="21" fill="rgba(0,240,120,0.45)"/><rect x="669.2" y="142" width="3.3" height="6" fill="#000"/><rect x="670.2" y="143" width="1.3" height="4" fill="#8080f0"/><g shape-rendering="geometricPrecision"><rect x="666.1" y="142" width="1.8" height="2" fill="#e8507c"/><rect x="673.4" y="142" width="0.9" height="2" fill="#ff8000"/><rect x="674.3" y="142" width="1.5" height="2" fill="#b01030"/><rect x="675.9" y="142" width="2.1" height="3.7" fill="#ff54c8"/><rect x="679" y="142" width="1.7" height="2" fill="#d02090"/><rect x="680.7" y="142" width="1.2" height="2" fill="#c02040"/><rect x="681.1" y="142" width="2.7" height="3.7" fill="#00e000"/></g><rect x="686" y="145" width="1" height="21" fill="rgba(0,240,120,0.45)"/><rect x="696" y="145" width="1" height="21" fill="rgba(0,240,120,0.45)"/><rect x="701" y="145" width="1" height="21" fill="rgba(0,240,120,0.2)"/><rect x="690" y="145" width="1" height="21" fill="rgba(0,240,120,0.45)"/><rect x="687.2" y="142" width="3.3" height="6" fill="#000"/><rect x="688.2" y="143" width="1.3" height="4" fill="#8080f0"/><g shape-rendering="geometricPrecision"><rect x="684.1" y="142" width="1.8" height="2" fill="#e8507c"/><rect x="691.4" y="142" width="0.9" height="2" fill="#ff8000"/><rect x="692.3" y="142" width="1.5" height="2" fill="#b01030"/><rect x="693.9" y="142" width="2.1" height="3.7" fill="#ff54c8"/><rect x="697" y="142" width="1.7" height="2" fill="#d02090"/><rect x="698.7" y="142" width="1.2" height="2" fill="#c02040"/><rect x="699.9" y="142" width="1.7" height="2" fill="#30d030"/></g><rect x="704" y="145" width="1" height="21" fill="rgba(0,240,120,0.45)"/><rect x="714" y="145" width="1" height="21" fill="rgba(0,240,120,0.45)"/><rect x="719" y="145" width="1" height="21" fill="rgba(0,240,120,0.2)"/><rect x="708" y="145" width="1" height="21" fill="rgba(0,240,120,0.45)"/><rect x="705.2" y="142" width="3.3" height="6" fill="#000"/><rect x="706.2" y="143" width="1.3" height="4" fill="#8080f0"/><g shape-rendering="geometricPrecision"><rect x="702.1" y="142" width="1.8" height="2" fill="#e8507c"/><rect x="709.4" y="142" width="0.9" height="2" fill="#ff8000"/><rect x="710.3" y="142" width="1.5" height="2" fill="#b01030"/><rect x="711.9" y="142" width="2.1" height="3.7" fill="#ff54c8"/><rect x="715" y="142" width="1.7" height="2" fill="#d02090"/><rect x="716.7" y="142" width="1.2" height="2" fill="#c02040"/><rect x="717.1" y="142" width="2.7" height="3.7" fill="#00e000"/></g><rect x="722" y="145" width="1" height="21" fill="rgba(0,240,120,0.45)"/><rect x="732" y="145" width="1" height="21" fill="rgba(0,240,120,0.45)"/><rect x="737" y="145" width="1" height="21" fill="rgba(0,240,120,0.2)"/><rect x="723.2" y="142" width="4.1" height="7.8" fill="#000"/><rect x="724.2" y="143" width="2.1" height="5.8" fill="#8080f0"/><g shape-rendering="geometricPrecision"><rect x="720.1" y="142" width="1.8" height="2" fill="#e8507c"/><rect x="727.4" y="142" width="0.9" height="2" fill="#ff8000"/><rect x="728.3" y="142" width="1.5" height="2" fill="#b01030"/><rect x="729.9" y="142" width="2.1" height="3.7" fill="#ff54c8"/><rect x="733" y="142" width="1.7" height="2" fill="#d02090"/><rect x="734.7" y="142" width="1.2" height="2" fill="#c02040"/><rect x="735.9" y="142" width="1.7" height="2" fill="#30d030"/></g><rect x="740" y="145" width="1" height="21" fill="rgba(0,240,120,0.45)"/><rect x="750" y="145" width="1" height="21" fill="rgba(0,240,120,0.45)"/><rect x="755" y="145" width="1" height="21" fill="rgba(0,240,120,0.2)"/><rect x="741.2" y="142" width="4.1" height="7.8" fill="#000"/><rect x="742.2" y="143" width="2.1" height="5.8" fill="#8080f0"/><g shape-rendering="geometricPrecision"><rect x="738.1" y="142" width="1.8" height="2" fill="#e8507c"/><rect x="745.4" y="142" width="0.9" height="2" fill="#ff8000"/><rect x="746.3" y="142" width="1.5" height="2" fill="#b01030"/><rect x="747.9" y="142" width="2.1" height="3.7" fill="#ff54c8"/><rect x="751" y="142" width="1.7" height="2" fill="#d02090"/><rect x="752.7" y="142" width="1.2" height="2" fill="#c02040"/><rect x="753.1" y="142" width="2.7" height="3.7" fill="#00e000"/></g><rect x="758" y="145" width="1" height="21" fill="rgba(0,240,120,0.45)"/><rect x="768" y="145" width="1" height="21" fill="rgba(0,240,120,0.45)"/><rect x="773" y="145" width="1" height="21" fill="rgba(0,240,120,0.2)"/><rect x="762" y="145" width="1" height="21" fill="rgba(0,240,120,0.45)"/><rect x="759.2" y="142" width="3.3" height="6" fill="#000"/><rect x="760.2" y="143" width="1.3" height="4" fill="#8080f0"/><g shape-rendering="geometricPrecision"><rect x="756.1" y="142" width="1.8" height="2" fill="#e8507c"/><rect x="763.4" y="142" width="0.9" height="2" fill="#ff8000"/><rect x="764.3" y="142" width="1.5" height="2" fill="#b01030"/><rect x="765.9" y="142" width="2.1" height="3.7" fill="#ff54c8"/><rect x="769" y="142" width="1.7" height="2" fill="#d02090"/><rect x="770.7" y="142" width="1.2" height="2" fill="#c02040"/><rect x="771.9" y="142" width="1.7" height="2" fill="#30d030"/></g><rect x="776" y="145" width="1" height="21" fill="rgba(0,240,120,0.45)"/><rect x="786" y="145" width="1" height="21" fill="rgba(0,240,120,0.45)"/><rect x="791" y="145" width="1" height="21" fill="rgba(0,240,120,0.2)"/><rect x="780" y="145" width="1" height="21" fill="rgba(0,240,120,0.45)"/><rect x="777.2" y="142" width="3.3" height="6" fill="#000"/><rect x="778.2" y="143" width="1.3" height="4" fill="#8080f0"/><g shape-rendering="geometricPrecision"><rect x="774.1" y="142" width="1.8" height="2" fill="#e8507c"/><rect x="781.4" y="142" width="0.9" height="2" fill="#ff8000"/><rect x="782.3" y="142" width="1.5" height="2" fill="#b01030"/><rect x="783.9" y="142" width="2.1" height="3.7" fill="#ff54c8"/><rect x="787" y="142" width="1.7" height="2" fill="#d02090"/><rect x="788.7" y="142" width="1.2" height="2" fill="#c02040"/><rect x="789.1" y="142" width="2.7" height="3.7" fill="#00e000"/></g><rect x="794" y="145" width="1" height="21" fill="rgba(0,240,120,0.45)"/><rect x="804" y="145" width="1" height="21" fill="rgba(0,240,120,0.45)"/><rect x="809" y="145" width="1" height="21" fill="rgba(0,240,120,0.2)"/><rect x="794.6" y="142" width="4.1" height="7.8" fill="#000"/><rect x="795.6" y="143" width="2.1" height="5.8" fill="#8080f0"/><rect x="801.1" y="142" width="3.4" height="6" fill="#000"/><rect x="802.1" y="143" width="1.4" height="4" fill="#8080f0"/><g shape-rendering="geometricPrecision"><rect x="792.1" y="142" width="1.8" height="2" fill="#e8507c"/><rect x="798.8" y="142" width="0.9" height="2" fill="#ff8000"/><rect x="799.7" y="142" width="1.5" height="2" fill="#b01030"/><rect x="804.6" y="142" width="1.2" height="2" fill="#ff8000"/><rect x="805.8" y="142" width="1.2" height="2" fill="#d02090"/><rect x="806.7" y="142" width="1.2" height="2" fill="#c02040"/><rect x="807.9" y="142" width="1.7" height="2" fill="#30d030"/></g><rect x="812" y="145" width="1" height="21" fill="rgba(0,240,120,0.45)"/><rect x="822" y="145" width="1" height="21" fill="rgba(0,240,120,0.45)"/><rect x="827" y="145" width="1" height="21" fill="rgba(0,240,120,0.2)"/><rect x="812.6" y="142" width="4.1" height="7.8" fill="#000"/><rect x="813.6" y="143" width="2.1" height="5.8" fill="#8080f0"/><rect x="819.1" y="142" width="3.4" height="6" fill="#000"/><rect x="820.1" y="143" width="1.4" height="4" fill="#8080f0"/><g shape-rendering="geometricPrecision"><rect x="810.1" y="142" width="1.8" height="2" fill="#e8507c"/><rect x="816.8" y="142" width="0.9" height="2" fill="#ff8000"/><rect x="817.7" y="142" width="1.5" height="2" fill="#b01030"/><rect x="822.6" y="142" width="1.2" height="2" fill="#ff8000"/><rect x="823.8" y="142" width="1.2" height="2" fill="#d02090"/><rect x="824.7" y="142" width="1.2" height="2" fill="#c02040"/><rect x="825.1" y="142" width="2.7" height="3.7" fill="#00e000"/></g><rect x="830" y="145" width="1" height="21" fill="rgba(0,240,120,0.45)"/><rect x="840" y="145" width="1" height="21" fill="rgba(0,240,120,0.45)"/><rect x="845" y="145" width="1" height="21" fill="rgba(0,240,120,0.2)"/><rect x="834" y="145" width="1" height="21" fill="rgba(0,240,120,0.45)"/><rect x="830.6" y="142" width="3.3" height="6" fill="#000"/><rect x="831.6" y="143" width="1.3" height="4" fill="#8080f0"/><rect x="837.1" y="142" width="3.4" height="6" fill="#000"/><rect x="838.1" y="143" width="1.4" height="4" fill="#8080f0"/><g shape-rendering="geometricPrecision"><rect x="828.1" y="142" width="1.8" height="2" fill="#e8507c"/><rect x="834.8" y="142" width="0.9" height="2" fill="#ff8000"/><rect x="835.7" y="142" width="1.5" height="2" fill="#b01030"/><rect x="840.6" y="142" width="1.2" height="2" fill="#ff8000"/><rect x="841.8" y="142" width="1.2" height="2" fill="#d02090"/><rect x="842.7" y="142" width="1.2" height="2" fill="#c02040"/><rect x="843.9" y="142" width="1.7" height="2" fill="#30d030"/></g><rect x="848" y="145" width="1" height="21" fill="rgba(0,240,120,0.45)"/><rect x="858" y="145" width="1" height="21" fill="rgba(0,240,120,0.45)"/><rect x="863" y="145" width="1" height="21" fill="rgba(0,240,120,0.2)"/><rect x="852" y="145" width="1" height="21" fill="rgba(0,240,120,0.45)"/><rect x="848.6" y="142" width="3.3" height="6" fill="#000"/><rect x="849.6" y="143" width="1.3" height="4" fill="#8080f0"/><rect x="855.1" y="142" width="3.4" height="6" fill="#000"/><rect x="856.1" y="143" width="1.4" height="4" fill="#8080f0"/><g shape-rendering="geometricPrecision"><rect x="846.1" y="142" width="1.8" height="2" fill="#e8507c"/><rect x="852.8" y="142" width="0.9" height="2" fill="#ff8000"/><rect x="853.7" y="142" width="1.5" height="2" fill="#b01030"/><rect x="858.6" y="142" width="1.2" height="2" fill="#ff8000"/><rect x="859.8" y="142" width="1.2" height="2" fill="#d02090"/><rect x="860.7" y="142" width="1.2" height="2" fill="#c02040"/><rect x="861.1" y="142" width="2.7" height="3.7" fill="#00e000"/></g><rect x="866" y="145" width="1" height="21" fill="rgba(0,240,120,0.45)"/><rect x="876" y="145" width="1" height="21" fill="rgba(0,240,120,0.45)"/><rect x="881" y="145" width="1" height="21" fill="rgba(0,240,120,0.2)"/><rect x="870" y="145" width="1" height="21" fill="rgba(0,240,120,0.45)"/><rect x="866.6" y="142" width="3.3" height="6" fill="#000"/><rect x="867.6" y="143" width="1.3" height="4" fill="#8080f0"/><rect x="873.1" y="142" width="3.4" height="6" fill="#000"/><rect x="874.1" y="143" width="1.4" height="4" fill="#8080f0"/><g shape-rendering="geometricPrecision"><rect x="864.1" y="142" width="1.8" height="2" fill="#e8507c"/><rect x="870.8" y="142" width="0.9" height="2" fill="#ff8000"/><rect x="871.7" y="142" width="1.5" height="2" fill="#b01030"/><rect x="876.6" y="142" width="1.2" height="2" fill="#ff8000"/><rect x="877.8" y="142" width="1.2" height="2" fill="#d02090"/><rect x="878.7" y="142" width="1.2" height="2" fill="#c02040"/><rect x="879.9" y="142" width="1.7" height="2" fill="#30d030"/></g><rect x="884" y="145" width="1" height="21" fill="rgba(0,240,120,0.45)"/><rect x="894" y="145" width="1" height="21" fill="rgba(0,240,120,0.45)"/><rect x="899" y="145" width="1" height="21" fill="rgba(0,240,120,0.2)"/><rect x="884.6" y="142" width="4.1" height="7.8" fill="#000"/><rect x="885.6" y="143" width="2.1" height="5.8" fill="#8080f0"/><rect x="891.1" y="142" width="3.4" height="6" fill="#000"/><rect x="892.1" y="143" width="1.4" height="4" fill="#8080f0"/><g shape-rendering="geometricPrecision"><rect x="882.1" y="142" width="1.8" height="2" fill="#e8507c"/><rect x="888.8" y="142" width="0.9" height="2" fill="#ff8000"/><rect x="889.7" y="142" width="1.5" height="2" fill="#b01030"/><rect x="894.6" y="142" width="1.2" height="2" fill="#ff8000"/><rect x="895.8" y="142" width="1.2" height="2" fill="#d02090"/><rect x="896.7" y="142" width="1.2" height="2" fill="#c02040"/><rect x="897.1" y="142" width="2.7" height="3.7" fill="#00e000"/></g><rect x="902" y="145" width="1" height="21" fill="rgba(0,240,120,0.45)"/><rect x="912" y="145" width="1" height="21" fill="rgba(0,240,120,0.45)"/><rect x="917" y="145" width="1" height="21" fill="rgba(0,240,120,0.2)"/><rect x="902.6" y="142" width="4.1" height="7.8" fill="#000"/><rect x="903.6" y="143" width="2.1" height="5.8" fill="#8080f0"/><rect x="909.1" y="142" width="3.4" height="6" fill="#000"/><rect x="910.1" y="143" width="1.4" height="4" fill="#8080f0"/><g shape-rendering="geometricPrecision"><rect x="900.1" y="142" width="1.8" height="2" fill="#e8507c"/><rect x="906.8" y="142" width="0.9" height="2" fill="#ff8000"/><rect x="907.7" y="142" width="1.5" height="2" fill="#b01030"/><rect x="912.6" y="142" width="1.2" height="2" fill="#ff8000"/><rect x="913.8" y="142" width="1.2" height="2" fill="#d02090"/><rect x="914.7" y="142" width="1.2" height="2" fill="#c02040"/><rect x="915.9" y="142" width="1.7" height="2" fill="#30d030"/></g><rect x="920" y="145" width="1" height="21" fill="rgba(0,240,120,0.45)"/><rect x="930" y="145" width="1" height="21" fill="rgba(0,240,120,0.45)"/><rect x="935" y="145" width="1" height="21" fill="rgba(0,240,120,0.2)"/><rect x="924" y="145" width="1" height="21" fill="rgba(0,240,120,0.45)"/><rect x="920.6" y="142" width="3.3" height="6" fill="#000"/><rect x="921.6" y="143" width="1.3" height="4" fill="#8080f0"/><rect x="927.1" y="142" width="3.4" height="6" fill="#000"/><rect x="928.1" y="143" width="1.4" height="4" fill="#8080f0"/><g shape-rendering="geometricPrecision"><rect x="918.1" y="142" width="1.8" height="2" fill="#e8507c"/><rect x="924.8" y="142" width="0.9" height="2" fill="#ff8000"/><rect x="925.7" y="142" width="1.5" height="2" fill="#b01030"/><rect x="930.6" y="142" width="1.2" height="2" fill="#ff8000"/><rect x="931.8" y="142" width="1.2" height="2" fill="#d02090"/><rect x="932.7" y="142" width="1.2" height="2" fill="#c02040"/><rect x="933.1" y="142" width="2.7" height="3.7" fill="#00e000"/></g><rect x="938" y="145" width="1" height="21" fill="rgba(0,240,120,0.45)"/><rect x="948" y="145" width="1" height="21" fill="rgba(0,240,120,0.45)"/><rect x="953" y="145" width="1" height="21" fill="rgba(0,240,120,0.2)"/><rect x="938.6" y="142" width="4.1" height="7.8" fill="#000"/><rect x="939.6" y="143" width="2.1" height="5.8" fill="#8080f0"/><rect x="945.1" y="142" width="3.4" height="6" fill="#000"/><rect x="946.1" y="143" width="1.4" height="4" fill="#8080f0"/><rect x="950" y="142" width="3.2" height="6" fill="#000"/><rect x="951" y="143" width="1.2" height="4" fill="#00c800"/><g shape-rendering="geometricPrecision"><rect x="936.1" y="142" width="1.8" height="2" fill="#e8507c"/><rect x="942.8" y="142" width="0.9" height="2" fill="#ff8000"/><rect x="943.7" y="142" width="1.5" height="2" fill="#b01030"/><rect x="948.6" y="142" width="1.2" height="2" fill="#ff8000"/></g><rect x="956" y="145" width="1" height="21" fill="rgba(0,240,120,0.45)"/><rect x="966" y="145" width="1" height="21" fill="rgba(0,240,120,0.45)"/><rect x="971" y="145" width="1" height="21" fill="rgba(0,240,120,0.2)"/><rect x="960" y="145" width="1" height="21" fill="rgba(0,240,120,0.45)"/><rect x="956.6" y="142" width="3.3" height="6" fill="#000"/><rect x="957.6" y="143" width="1.3" height="4" fill="#8080f0"/><rect x="963.1" y="142" width="3.4" height="6" fill="#000"/><rect x="964.1" y="143" width="1.4" height="4" fill="#8080f0"/><rect x="968" y="142" width="3.2" height="6" fill="#000"/><rect x="969" y="143" width="1.2" height="4" fill="#00c800"/><g shape-rendering="geometricPrecision"><rect x="954.1" y="142" width="1.8" height="2" fill="#e8507c"/><rect x="960.8" y="142" width="0.9" height="2" fill="#ff8000"/><rect x="961.7" y="142" width="1.5" height="2" fill="#b01030"/><rect x="966.6" y="142" width="1.2" height="2" fill="#ff8000"/></g><rect x="974" y="145" width="1" height="21" fill="rgba(0,240,120,0.45)"/><rect x="984" y="145" width="1" height="21" fill="rgba(0,240,120,0.45)"/><rect x="989" y="145" width="1" height="21" fill="rgba(0,240,120,0.2)"/><rect x="974.6" y="142" width="4.1" height="7.8" fill="#000"/><rect x="975.6" y="143" width="2.1" height="5.8" fill="#8080f0"/><rect x="981.1" y="142" width="3.4" height="6" fill="#000"/><rect x="982.1" y="143" width="1.4" height="4" fill="#8080f0"/><g shape-rendering="geometricPrecision"><rect x="972.1" y="142" width="1.8" height="2" fill="#e8507c"/><rect x="978.8" y="142" width="0.9" height="2" fill="#ff8000"/><rect x="979.7" y="142" width="1.5" height="2" fill="#b01030"/><rect x="984.6" y="142" width="1.2" height="2" fill="#ff8000"/><rect x="985.8" y="142" width="1.2" height="2" fill="#d02090"/><rect x="986.7" y="142" width="1.2" height="2" fill="#c02040"/><rect x="987.9" y="142" width="1.7" height="2" fill="#30d030"/></g><rect x="986.2" y="142" width="10.4" height="22" fill="#000"/><rect x="987.2" y="143" width="8.4" height="20" fill="#ff64c4"/><text x="991.4" y="152.5" class="bm">I</text><text x="991.4" y="163.4" class="bm" clip-path="url(#cpA)">S</text><rect x="997.5" y="142" width="1" height="24" fill="#60f0a0"/><rect x="998.2" y="142" width="753.3" height="24" fill="#000"/><rect x="999.8" y="143" width="9.9" height="22" fill="#8080f0"/><rect x="1011.7" y="143" width="7.6" height="22" fill="#00fa80"/><rect x="1020.9" y="143" width="10.3" height="22" fill="#8080f0"/><rect x="1032.8" y="143" width="3.9" height="22" fill="#00fa80"/><rect x="1037.1" y="142" width="0.9" height="24" fill="#b4b4b4"/><text x="1004.4" y="153" class="bl">S</text><text x="1004.4" y="163.2" class="bl">R</text><text x="1025.9" y="153" class="bl">D</text><text x="1025.9" y="163.2" class="bl">R</text><rect x="997.7" y="142" width="1.3" height="2" fill="#ff7a00"/><rect x="1039.5" y="143" width="9.9" height="22" fill="#8080f0"/><rect x="1051.4" y="143" width="7.6" height="22" fill="#00fa80"/><rect x="1060.6" y="143" width="10.3" height="22" fill="#8080f0"/><rect x="1072.5" y="143" width="3.9" height="22" fill="#00fa80"/><rect x="1076.8" y="142" width="0.9" height="24" fill="#b4b4b4"/><text x="1044.1" y="153" class="bl">S</text><text x="1044.1" y="163.2" class="bl">R</text><text x="1065.6" y="153" class="bl">D</text><text x="1065.6" y="163.2" class="bl">R</text><rect x="1037.4" y="142" width="1.3" height="2" fill="#ff7a00"/><rect x="1079.2" y="143" width="9.9" height="22" fill="#8080f0"/><rect x="1091.1" y="143" width="7.6" height="22" fill="#00fa80"/><rect x="1100.3" y="143" width="10.3" height="22" fill="#8080f0"/><rect x="1112.2" y="143" width="3.9" height="22" fill="#00fa80"/><rect x="1116.5" y="142" width="0.9" height="24" fill="#b4b4b4"/><text x="1083.8" y="153" class="bl">S</text><text x="1083.8" y="163.2" class="bl">R</text><text x="1105.3" y="153" class="bl">D</text><text x="1105.3" y="163.2" class="bl">R</text><rect x="1077.1" y="142" width="1.3" height="2" fill="#ff7a00"/><rect x="1118.9" y="143" width="9.9" height="22" fill="#8080f0"/><rect x="1130.8" y="143" width="7.6" height="22" fill="#00fa80"/><rect x="1140" y="143" width="10.3" height="22" fill="#8080f0"/><rect x="1151.9" y="143" width="3.9" height="22" fill="#00fa80"/><rect x="1156.2" y="142" width="0.9" height="24" fill="#b4b4b4"/><text x="1123.5" y="153" class="bl">S</text><text x="1123.5" y="163.2" class="bl">R</text><text x="1145" y="153" class="bl">D</text><text x="1145" y="163.2" class="bl">R</text><rect x="1116.8" y="142" width="1.3" height="2" fill="#ff7a00"/><rect x="1158.6" y="143" width="9.9" height="22" fill="#8080f0"/><rect x="1170.5" y="143" width="7.6" height="22" fill="#00fa80"/><rect x="1179.7" y="143" width="10.3" height="22" fill="#8080f0"/><rect x="1191.6" y="143" width="3.9" height="22" fill="#00fa80"/><rect x="1195.9" y="142" width="0.9" height="24" fill="#b4b4b4"/><text x="1163.2" y="153" class="bl">S</text><text x="1163.2" y="163.2" class="bl">R</text><text x="1184.7" y="153" class="bl">D</text><text x="1184.7" y="163.2" class="bl">R</text><rect x="1156.5" y="142" width="1.3" height="2" fill="#ff7a00"/><rect x="1198.3" y="143" width="9.9" height="22" fill="#8080f0"/><rect x="1210.2" y="143" width="7.6" height="22" fill="#00fa80"/><rect x="1219.4" y="143" width="10.3" height="22" fill="#8080f0"/><rect x="1231.3" y="143" width="3.9" height="22" fill="#00fa80"/><rect x="1235.6" y="142" width="0.9" height="24" fill="#b4b4b4"/><text x="1202.9" y="153" class="bl">S</text><text x="1202.9" y="163.2" class="bl">R</text><text x="1224.4" y="153" class="bl">D</text><text x="1224.4" y="163.2" class="bl">R</text><rect x="1196.2" y="142" width="1.3" height="2" fill="#ff7a00"/><rect x="1238" y="143" width="9.9" height="22" fill="#8080f0"/><rect x="1249.9" y="143" width="7.6" height="22" fill="#00fa80"/><rect x="1259.1" y="143" width="10.3" height="22" fill="#8080f0"/><rect x="1271" y="143" width="3.9" height="22" fill="#00fa80"/><rect x="1275.3" y="142" width="0.9" height="24" fill="#b4b4b4"/><text x="1242.6" y="153" class="bl">S</text><text x="1242.6" y="163.2" class="bl">R</text><text x="1264.1" y="153" class="bl">D</text><text x="1264.1" y="163.2" class="bl">R</text><rect x="1235.9" y="142" width="1.3" height="2" fill="#ff7a00"/><rect x="1277.7" y="143" width="9.9" height="22" fill="#8080f0"/><rect x="1289.6" y="143" width="7.6" height="22" fill="#00fa80"/><rect x="1298.8" y="143" width="10.3" height="22" fill="#8080f0"/><rect x="1310.7" y="143" width="3.9" height="22" fill="#00fa80"/><rect x="1315" y="142" width="0.9" height="24" fill="#b4b4b4"/><text x="1282.3" y="153" class="bl">S</text><text x="1282.3" y="163.2" class="bl">R</text><text x="1303.8" y="153" class="bl">D</text><text x="1303.8" y="163.2" class="bl">R</text><rect x="1275.6" y="142" width="1.3" height="2" fill="#ff7a00"/><rect x="1317.4" y="143" width="9.9" height="22" fill="#8080f0"/><rect x="1329.3" y="143" width="7.6" height="22" fill="#00fa80"/><rect x="1338.5" y="143" width="10.3" height="22" fill="#8080f0"/><rect x="1350.4" y="143" width="3.9" height="22" fill="#00fa80"/><rect x="1354.7" y="142" width="0.9" height="24" fill="#b4b4b4"/><text x="1322" y="153" class="bl">S</text><text x="1322" y="163.2" class="bl">R</text><text x="1343.5" y="153" class="bl">D</text><text x="1343.5" y="163.2" class="bl">R</text><rect x="1315.3" y="142" width="1.3" height="2" fill="#ff7a00"/><rect x="1357.1" y="143" width="9.9" height="22" fill="#8080f0"/><rect x="1369" y="143" width="7.6" height="22" fill="#00fa80"/><rect x="1378.2" y="143" width="10.3" height="22" fill="#8080f0"/><rect x="1390.1" y="143" width="3.9" height="22" fill="#00fa80"/><rect x="1394.4" y="142" width="0.9" height="24" fill="#b4b4b4"/><text x="1361.7" y="153" class="bl">S</text><text x="1361.7" y="163.2" class="bl">R</text><text x="1383.2" y="153" class="bl">D</text><text x="1383.2" y="163.2" class="bl">R</text><rect x="1355" y="142" width="1.3" height="2" fill="#ff7a00"/><rect x="1396.8" y="143" width="9.9" height="22" fill="#8080f0"/><rect x="1408.7" y="143" width="7.6" height="22" fill="#00fa80"/><rect x="1417.9" y="143" width="10.3" height="22" fill="#8080f0"/><rect x="1429.8" y="143" width="3.9" height="22" fill="#00fa80"/><rect x="1434.1" y="142" width="0.9" height="24" fill="#b4b4b4"/><text x="1401.4" y="153" class="bl">S</text><text x="1401.4" y="163.2" class="bl">R</text><text x="1422.9" y="153" class="bl">D</text><text x="1422.9" y="163.2" class="bl">R</text><rect x="1394.7" y="142" width="1.3" height="2" fill="#ff7a00"/><rect x="1436.5" y="143" width="9.9" height="22" fill="#8080f0"/><rect x="1448.4" y="143" width="7.6" height="22" fill="#00fa80"/><rect x="1457.6" y="143" width="10.3" height="22" fill="#8080f0"/><rect x="1469.5" y="143" width="3.9" height="22" fill="#00fa80"/><rect x="1473.8" y="142" width="0.9" height="24" fill="#b4b4b4"/><text x="1441.1" y="153" class="bl">S</text><text x="1441.1" y="163.2" class="bl">R</text><text x="1462.6" y="153" class="bl">D</text><text x="1462.6" y="163.2" class="bl">R</text><rect x="1434.4" y="142" width="1.3" height="2" fill="#ff7a00"/><rect x="1476.2" y="143" width="9.9" height="22" fill="#8080f0"/><rect x="1488.1" y="143" width="7.6" height="22" fill="#00fa80"/><rect x="1497.3" y="143" width="10.3" height="22" fill="#8080f0"/><rect x="1509.2" y="143" width="3.9" height="22" fill="#00fa80"/><rect x="1513.5" y="142" width="0.9" height="24" fill="#b4b4b4"/><text x="1480.8" y="153" class="bl">S</text><text x="1480.8" y="163.2" class="bl">R</text><text x="1502.3" y="153" class="bl">D</text><text x="1502.3" y="163.2" class="bl">R</text><rect x="1474.1" y="142" width="1.3" height="2" fill="#ff7a00"/><rect x="1515.9" y="143" width="9.9" height="22" fill="#8080f0"/><rect x="1527.8" y="143" width="7.6" height="22" fill="#00fa80"/><rect x="1537" y="143" width="10.3" height="22" fill="#8080f0"/><rect x="1548.9" y="143" width="3.9" height="22" fill="#00fa80"/><rect x="1553.2" y="142" width="0.9" height="24" fill="#b4b4b4"/><text x="1520.5" y="153" class="bl">S</text><text x="1520.5" y="163.2" class="bl">R</text><text x="1542" y="153" class="bl">D</text><text x="1542" y="163.2" class="bl">R</text><rect x="1513.8" y="142" width="1.3" height="2" fill="#ff7a00"/><rect x="1555.6" y="143" width="9.9" height="22" fill="#8080f0"/><rect x="1567.5" y="143" width="7.6" height="22" fill="#00fa80"/><rect x="1576.7" y="143" width="10.3" height="22" fill="#8080f0"/><rect x="1588.6" y="143" width="3.9" height="22" fill="#00fa80"/><rect x="1592.9" y="142" width="0.9" height="24" fill="#b4b4b4"/><text x="1560.2" y="153" class="bl">S</text><text x="1560.2" y="163.2" class="bl">R</text><text x="1581.7" y="153" class="bl">D</text><text x="1581.7" y="163.2" class="bl">R</text><rect x="1553.5" y="142" width="1.3" height="2" fill="#ff7a00"/><rect x="1595.3" y="143" width="9.9" height="22" fill="#8080f0"/><rect x="1607.2" y="143" width="7.6" height="22" fill="#00fa80"/><rect x="1616.4" y="143" width="10.3" height="22" fill="#8080f0"/><rect x="1628.3" y="143" width="3.9" height="22" fill="#00fa80"/><rect x="1632.6" y="142" width="0.9" height="24" fill="#b4b4b4"/><text x="1599.9" y="153" class="bl">S</text><text x="1599.9" y="163.2" class="bl">R</text><text x="1621.4" y="153" class="bl">D</text><text x="1621.4" y="163.2" class="bl">R</text><rect x="1593.2" y="142" width="1.3" height="2" fill="#ff7a00"/><rect x="1635" y="143" width="9.9" height="22" fill="#8080f0"/><rect x="1646.9" y="143" width="7.6" height="22" fill="#00fa80"/><rect x="1656.1" y="143" width="10.3" height="22" fill="#8080f0"/><rect x="1668" y="143" width="3.9" height="22" fill="#00fa80"/><rect x="1672.3" y="142" width="0.9" height="24" fill="#b4b4b4"/><text x="1639.6" y="153" class="bl">S</text><text x="1639.6" y="163.2" class="bl">R</text><text x="1661.1" y="153" class="bl">D</text><text x="1661.1" y="163.2" class="bl">R</text><rect x="1632.9" y="142" width="1.3" height="2" fill="#ff7a00"/><rect x="1674.7" y="143" width="9.9" height="22" fill="#8080f0"/><rect x="1686.6" y="143" width="7.6" height="22" fill="#00fa80"/><rect x="1695.8" y="143" width="10.3" height="22" fill="#8080f0"/><rect x="1707.7" y="143" width="3.9" height="22" fill="#00fa80"/><rect x="1712" y="142" width="0.9" height="24" fill="#b4b4b4"/><text x="1679.3" y="153" class="bl">S</text><text x="1679.3" y="163.2" class="bl">R</text><text x="1700.8" y="153" class="bl">D</text><text x="1700.8" y="163.2" class="bl">R</text><rect x="1672.6" y="142" width="1.3" height="2" fill="#ff7a00"/><rect x="1714.4" y="143" width="9.9" height="22" fill="#8080f0"/><rect x="1726.3" y="143" width="7.6" height="22" fill="#00fa80"/><rect x="1735.5" y="143" width="10.3" height="22" fill="#8080f0"/><rect x="1747.4" y="143" width="3.9" height="22" fill="#00fa80"/><text x="1719" y="153" class="bl">S</text><text x="1719" y="163.2" class="bl">R</text><text x="1740.5" y="153" class="bl">D</text><text x="1740.5" y="163.2" class="bl">R</text><rect x="1712.3" y="142" width="1.3" height="2" fill="#ff7a00"/><rect x="1751" y="142" width="4" height="24" fill="#000"/><rect x="1752" y="143" width="2" height="22" fill="#fff"/><rect x="1754" y="142" width="112" height="24" fill="#000"/><rect x="1755" y="143" width="110" height="22" fill="#00fa80"/><rect x="1755" y="143" width="10.5" height="22" fill="#00d200"/><rect x="1765.5" y="142" width="1.5" height="24" fill="#000"/><text x="1760.3" y="153.2" class="bl">R</text><path d="M1750.5 166h7l-3.5 3.5z" fill="#000"/></g><g><rect x="261" y="205" width="1603" height="1" fill="#000"/><rect x="270" y="196" width="1" height="9" fill="#000"/><rect x="286" y="196" width="1" height="9" fill="#000"/><rect x="303" y="196" width="1" height="9" fill="#000"/><rect x="319" y="196" width="1" height="9" fill="#000"/><rect x="336" y="196" width="1" height="9" fill="#000"/><rect x="352" y="196" width="1" height="9" fill="#000"/><rect x="369" y="196" width="1" height="9" fill="#000"/><rect x="385" y="181" width="1" height="24" fill="#000"/><text x="385.5" y="180.6" class="rl">45298600</text><rect x="402" y="196" width="1" height="9" fill="#000"/><rect x="418" y="196" width="1" height="9" fill="#000"/><rect x="435" y="196" width="1" height="9" fill="#000"/><rect x="451" y="196" width="1" height="9" fill="#000"/><rect x="468" y="196" width="1" height="9" fill="#000"/><rect x="484" y="196" width="1" height="9" fill="#000"/><rect x="501" y="196" width="1" height="9" fill="#000"/><rect x="517" y="196" width="1" height="9" fill="#000"/><rect x="534" y="196" width="1" height="9" fill="#000"/><rect x="550" y="181" width="1" height="24" fill="#000"/><text x="550.5" y="180.6" class="rl">45585300</text><rect x="567" y="196" width="1" height="9" fill="#000"/><rect x="583" y="196" width="1" height="9" fill="#000"/><rect x="600" y="196" width="1" height="9" fill="#000"/><rect x="616" y="196" width="1" height="9" fill="#000"/><rect x="633" y="196" width="1" height="9" fill="#000"/><rect x="649" y="196" width="1" height="9" fill="#000"/><rect x="666" y="196" width="1" height="9" fill="#000"/><rect x="682" y="196" width="1" height="9" fill="#000"/><rect x="699" y="196" width="1" height="9" fill="#000"/><rect x="715" y="181" width="1" height="24" fill="#000"/><text x="715.5" y="180.6" class="rl">45872000</text><rect x="732" y="196" width="1" height="9" fill="#000"/><rect x="748" y="196" width="1" height="9" fill="#000"/><rect x="765" y="196" width="1" height="9" fill="#000"/><rect x="781" y="196" width="1" height="9" fill="#000"/><rect x="798" y="196" width="1" height="9" fill="#000"/><rect x="814" y="196" width="1" height="9" fill="#000"/><rect x="831" y="196" width="1" height="9" fill="#000"/><rect x="847" y="196" width="1" height="9" fill="#000"/><rect x="864" y="196" width="1" height="9" fill="#000"/><rect x="880" y="181" width="1" height="24" fill="#000"/><text x="880.5" y="180.6" class="rl">46158700</text><rect x="897" y="196" width="1" height="9" fill="#000"/><rect x="913" y="196" width="1" height="9" fill="#000"/><rect x="930" y="196" width="1" height="9" fill="#000"/><rect x="946" y="196" width="1" height="9" fill="#000"/><rect x="963" y="196" width="1" height="9" fill="#000"/><rect x="979" y="196" width="1" height="9" fill="#000"/><rect x="996" y="196" width="1" height="9" fill="#000"/><rect x="1012" y="196" width="1" height="9" fill="#000"/><rect x="1029" y="196" width="1" height="9" fill="#000"/><rect x="1045" y="181" width="1" height="24" fill="#000"/><text x="1045.5" y="180.6" class="rl">46445400</text><rect x="1062" y="196" width="1" height="9" fill="#000"/><rect x="1078" y="196" width="1" height="9" fill="#000"/><rect x="1095" y="196" width="1" height="9" fill="#000"/><rect x="1111" y="196" width="1" height="9" fill="#000"/><rect x="1128" y="196" width="1" height="9" fill="#000"/><rect x="1144" y="196" width="1" height="9" fill="#000"/><rect x="1161" y="196" width="1" height="9" fill="#000"/><rect x="1177" y="196" width="1" height="9" fill="#000"/><rect x="1194" y="196" width="1" height="9" fill="#000"/><rect x="1210" y="181" width="1" height="24" fill="#000"/><text x="1210.5" y="180.6" class="rl">46732100</text><rect x="1227" y="196" width="1" height="9" fill="#000"/><rect x="1243" y="196" width="1" height="9" fill="#000"/><rect x="1260" y="196" width="1" height="9" fill="#000"/><rect x="1276" y="196" width="1" height="9" fill="#000"/><rect x="1293" y="196" width="1" height="9" fill="#000"/><rect x="1309" y="196" width="1" height="9" fill="#000"/><rect x="1326" y="196" width="1" height="9" fill="#000"/><rect x="1342" y="196" width="1" height="9" fill="#000"/><rect x="1359" y="196" width="1" height="9" fill="#000"/><rect x="1375" y="181" width="1" height="24" fill="#000"/><text x="1375.5" y="180.6" class="rl">47018800</text><rect x="1392" y="196" width="1" height="9" fill="#000"/><rect x="1408" y="196" width="1" height="9" fill="#000"/><rect x="1425" y="196" width="1" height="9" fill="#000"/><rect x="1441" y="196" width="1" height="9" fill="#000"/><rect x="1458" y="196" width="1" height="9" fill="#000"/><rect x="1474" y="196" width="1" height="9" fill="#000"/><rect x="1491" y="196" width="1" height="9" fill="#000"/><rect x="1507" y="196" width="1" height="9" fill="#000"/><rect x="1524" y="196" width="1" height="9" fill="#000"/><rect x="1540" y="181" width="1" height="24" fill="#000"/><text x="1540.5" y="180.6" class="rl">47305500</text><rect x="1557" y="196" width="1" height="9" fill="#000"/><rect x="1573" y="196" width="1" height="9" fill="#000"/><rect x="1590" y="196" width="1" height="9" fill="#000"/><rect x="1606" y="196" width="1" height="9" fill="#000"/><rect x="1623" y="196" width="1" height="9" fill="#000"/><rect x="1639" y="196" width="1" height="9" fill="#000"/><rect x="1656" y="196" width="1" height="9" fill="#000"/><rect x="1672" y="196" width="1" height="9" fill="#000"/><rect x="1689" y="196" width="1" height="9" fill="#000"/><rect x="1705" y="181" width="1" height="24" fill="#000"/><text x="1705.5" y="180.6" class="rl">47592200</text><rect x="1722" y="196" width="1" height="9" fill="#000"/><rect x="1738" y="196" width="1" height="9" fill="#000"/><rect x="1755" y="196" width="1" height="9" fill="#000"/><rect x="1771" y="196" width="1" height="9" fill="#000"/><rect x="1788" y="196" width="1" height="9" fill="#000"/><rect x="1804" y="196" width="1" height="9" fill="#000"/><rect x="1821" y="196" width="1" height="9" fill="#000"/><rect x="1837" y="196" width="1" height="9" fill="#000"/><rect x="1854" y="196" width="1" height="9" fill="#000"/></g><g><rect x="261" y="230" width="279" height="24" fill="#000"/><rect x="262" y="231" width="277" height="22" fill="#00fa80"/><rect x="1754" y="230" width="112" height="24" fill="#000"/><rect x="1755" y="231" width="110" height="22" fill="#00fa80"/><rect x="1755" y="231" width="10.5" height="22" fill="#00d200"/><rect x="1765.5" y="230" width="1.5" height="24" fill="#000"/><text x="1760.3" y="241.2" class="bl">R</text><rect x="542" y="281" width="1" height="20" fill="rgba(0,240,120,0.24750000000000003)"/><rect x="552" y="281" width="1" height="20" fill="rgba(0,240,120,0.24750000000000003)"/><rect x="557" y="281" width="1" height="20" fill="rgba(0,240,120,0.11000000000000001)"/><rect x="543.2" y="278" width="4.1" height="7.8" fill="#000"/><rect x="544.2" y="279" width="2.1" height="5.8" fill="#8080f0"/><g shape-rendering="geometricPrecision"><rect x="540.1" y="278" width="1.8" height="2" fill="#e8507c"/><rect x="547.4" y="278" width="0.9" height="2" fill="#ff8000"/><rect x="548.3" y="278" width="1.5" height="2" fill="#b01030"/><rect x="549.9" y="278" width="2.1" height="3.7" fill="#ff54c8"/><rect x="553" y="278" width="1.7" height="2" fill="#d02090"/><rect x="554.7" y="278" width="2.6" height="2" fill="#c03048"/></g><rect x="560" y="281" width="1" height="20" fill="rgba(0,240,120,0.24750000000000003)"/><rect x="570" y="281" width="1" height="20" fill="rgba(0,240,120,0.24750000000000003)"/><rect x="575" y="281" width="1" height="20" fill="rgba(0,240,120,0.11000000000000001)"/><rect x="561.2" y="278" width="4.1" height="7.8" fill="#000"/><rect x="562.2" y="279" width="2.1" height="5.8" fill="#8080f0"/><g shape-rendering="geometricPrecision"><rect x="558.1" y="278" width="1.8" height="2" fill="#e8507c"/><rect x="565.4" y="278" width="0.9" height="2" fill="#ff8000"/><rect x="566.3" y="278" width="1.5" height="2" fill="#b01030"/><rect x="567.9" y="278" width="2.1" height="3.7" fill="#ff54c8"/><rect x="571" y="278" width="1.7" height="2" fill="#d02090"/><rect x="572.7" y="278" width="2.6" height="2" fill="#c03048"/></g><rect x="578" y="281" width="1" height="20" fill="rgba(0,240,120,0.24750000000000003)"/><rect x="588" y="281" width="1" height="20" fill="rgba(0,240,120,0.24750000000000003)"/><rect x="593" y="281" width="1" height="20" fill="rgba(0,240,120,0.11000000000000001)"/><rect x="579.2" y="278" width="4.1" height="7.8" fill="#000"/><rect x="580.2" y="279" width="2.1" height="5.8" fill="#8080f0"/><g shape-rendering="geometricPrecision"><rect x="576.1" y="278" width="1.8" height="2" fill="#e8507c"/><rect x="583.4" y="278" width="0.9" height="2" fill="#ff8000"/><rect x="584.3" y="278" width="1.5" height="2" fill="#b01030"/><rect x="585.9" y="278" width="2.1" height="3.7" fill="#ff54c8"/><rect x="589" y="278" width="1.7" height="2" fill="#d02090"/><rect x="590.7" y="278" width="2.6" height="2" fill="#c03048"/></g><rect x="596" y="281" width="1" height="20" fill="rgba(0,240,120,0.24750000000000003)"/><rect x="606" y="281" width="1" height="20" fill="rgba(0,240,120,0.24750000000000003)"/><rect x="611" y="281" width="1" height="20" fill="rgba(0,240,120,0.11000000000000001)"/><rect x="600" y="281" width="1" height="20" fill="rgba(0,240,120,0.24750000000000003)"/><rect x="597.2" y="278" width="3.3" height="6" fill="#000"/><rect x="598.2" y="279" width="1.3" height="4" fill="#8080f0"/><g shape-rendering="geometricPrecision"><rect x="594.1" y="278" width="1.8" height="2" fill="#e8507c"/><rect x="601.4" y="278" width="0.9" height="2" fill="#ff8000"/><rect x="602.3" y="278" width="1.5" height="2" fill="#b01030"/><rect x="603.9" y="278" width="2.1" height="3.7" fill="#ff54c8"/><rect x="607" y="278" width="1.7" height="2" fill="#d02090"/><rect x="608.7" y="278" width="2.6" height="2" fill="#c03048"/></g><rect x="614" y="281" width="1" height="20" fill="rgba(0,240,120,0.24750000000000003)"/><rect x="624" y="281" width="1" height="20" fill="rgba(0,240,120,0.24750000000000003)"/><rect x="629" y="281" width="1" height="20" fill="rgba(0,240,120,0.11000000000000001)"/><rect x="615.2" y="278" width="4.1" height="7.8" fill="#000"/><rect x="616.2" y="279" width="2.1" height="5.8" fill="#8080f0"/><g shape-rendering="geometricPrecision"><rect x="612.1" y="278" width="1.8" height="2" fill="#e8507c"/><rect x="619.4" y="278" width="0.9" height="2" fill="#ff8000"/><rect x="620.3" y="278" width="1.5" height="2" fill="#b01030"/><rect x="621.9" y="278" width="2.1" height="3.7" fill="#ff54c8"/><rect x="625" y="278" width="1.7" height="2" fill="#d02090"/><rect x="626.7" y="278" width="2.6" height="2" fill="#c03048"/></g><rect x="632" y="281" width="1" height="20" fill="rgba(0,240,120,0.24750000000000003)"/><rect x="642" y="281" width="1" height="20" fill="rgba(0,240,120,0.24750000000000003)"/><rect x="647" y="281" width="1" height="20" fill="rgba(0,240,120,0.11000000000000001)"/><rect x="636" y="281" width="1" height="20" fill="rgba(0,240,120,0.24750000000000003)"/><rect x="633.2" y="278" width="3.3" height="6" fill="#000"/><rect x="634.2" y="279" width="1.3" height="4" fill="#8080f0"/><g shape-rendering="geometricPrecision"><rect x="630.1" y="278" width="1.8" height="2" fill="#e8507c"/><rect x="637.4" y="278" width="0.9" height="2" fill="#ff8000"/><rect x="638.3" y="278" width="1.5" height="2" fill="#b01030"/><rect x="639.9" y="278" width="2.1" height="3.7" fill="#ff54c8"/><rect x="643" y="278" width="1.7" height="2" fill="#d02090"/><rect x="644.7" y="278" width="2.6" height="2" fill="#c03048"/></g><rect x="650" y="281" width="1" height="20" fill="rgba(0,240,120,0.24750000000000003)"/><rect x="660" y="281" width="1" height="20" fill="rgba(0,240,120,0.24750000000000003)"/><rect x="665" y="281" width="1" height="20" fill="rgba(0,240,120,0.11000000000000001)"/><rect x="651.2" y="278" width="4.1" height="7.8" fill="#000"/><rect x="652.2" y="279" width="2.1" height="5.8" fill="#8080f0"/><g shape-rendering="geometricPrecision"><rect x="648.1" y="278" width="1.8" height="2" fill="#e8507c"/><rect x="655.4" y="278" width="0.9" height="2" fill="#ff8000"/><rect x="656.3" y="278" width="1.5" height="2" fill="#b01030"/><rect x="657.9" y="278" width="2.1" height="3.7" fill="#ff54c8"/><rect x="661" y="278" width="1.7" height="2" fill="#d02090"/><rect x="662.7" y="278" width="2.6" height="2" fill="#c03048"/></g><rect x="668" y="281" width="1" height="20" fill="rgba(0,240,120,0.24750000000000003)"/><rect x="678" y="281" width="1" height="20" fill="rgba(0,240,120,0.24750000000000003)"/><rect x="683" y="281" width="1" height="20" fill="rgba(0,240,120,0.11000000000000001)"/><rect x="672" y="281" width="1" height="20" fill="rgba(0,240,120,0.24750000000000003)"/><rect x="669.2" y="278" width="3.3" height="6" fill="#000"/><rect x="670.2" y="279" width="1.3" height="4" fill="#8080f0"/><g shape-rendering="geometricPrecision"><rect x="666.1" y="278" width="1.8" height="2" fill="#e8507c"/><rect x="673.4" y="278" width="0.9" height="2" fill="#ff8000"/><rect x="674.3" y="278" width="1.5" height="2" fill="#b01030"/><rect x="675.9" y="278" width="2.1" height="3.7" fill="#ff54c8"/><rect x="679" y="278" width="1.7" height="2" fill="#d02090"/><rect x="680.7" y="278" width="2.6" height="2" fill="#c03048"/></g><rect x="686" y="281" width="1" height="20" fill="rgba(0,240,120,0.24750000000000003)"/><rect x="696" y="281" width="1" height="20" fill="rgba(0,240,120,0.24750000000000003)"/><rect x="701" y="281" width="1" height="20" fill="rgba(0,240,120,0.11000000000000001)"/><rect x="690" y="281" width="1" height="20" fill="rgba(0,240,120,0.24750000000000003)"/><rect x="687.2" y="278" width="3.3" height="6" fill="#000"/><rect x="688.2" y="279" width="1.3" height="4" fill="#8080f0"/><g shape-rendering="geometricPrecision"><rect x="684.1" y="278" width="1.8" height="2" fill="#e8507c"/><rect x="691.4" y="278" width="0.9" height="2" fill="#ff8000"/><rect x="692.3" y="278" width="1.5" height="2" fill="#b01030"/><rect x="693.9" y="278" width="2.1" height="3.7" fill="#ff54c8"/><rect x="697" y="278" width="1.7" height="2" fill="#d02090"/><rect x="698.7" y="278" width="2.6" height="2" fill="#c03048"/></g><rect x="704" y="281" width="1" height="20" fill="rgba(0,240,120,0.24750000000000003)"/><rect x="714" y="281" width="1" height="20" fill="rgba(0,240,120,0.24750000000000003)"/><rect x="719" y="281" width="1" height="20" fill="rgba(0,240,120,0.11000000000000001)"/><rect x="708" y="281" width="1" height="20" fill="rgba(0,240,120,0.24750000000000003)"/><rect x="705.2" y="278" width="3.3" height="6" fill="#000"/><rect x="706.2" y="279" width="1.3" height="4" fill="#8080f0"/><g shape-rendering="geometricPrecision"><rect x="702.1" y="278" width="1.8" height="2" fill="#e8507c"/><rect x="709.4" y="278" width="0.9" height="2" fill="#ff8000"/><rect x="710.3" y="278" width="1.5" height="2" fill="#b01030"/><rect x="711.9" y="278" width="2.1" height="3.7" fill="#ff54c8"/><rect x="715" y="278" width="1.7" height="2" fill="#d02090"/><rect x="716.7" y="278" width="2.6" height="2" fill="#c03048"/></g><rect x="722" y="281" width="1" height="20" fill="rgba(0,240,120,0.24750000000000003)"/><rect x="732" y="281" width="1" height="20" fill="rgba(0,240,120,0.24750000000000003)"/><rect x="737" y="281" width="1" height="20" fill="rgba(0,240,120,0.11000000000000001)"/><rect x="723.2" y="278" width="4.1" height="7.8" fill="#000"/><rect x="724.2" y="279" width="2.1" height="5.8" fill="#8080f0"/><g shape-rendering="geometricPrecision"><rect x="720.1" y="278" width="1.8" height="2" fill="#e8507c"/><rect x="727.4" y="278" width="0.9" height="2" fill="#ff8000"/><rect x="728.3" y="278" width="1.5" height="2" fill="#b01030"/><rect x="729.9" y="278" width="2.1" height="3.7" fill="#ff54c8"/><rect x="733" y="278" width="1.7" height="2" fill="#d02090"/><rect x="734.7" y="278" width="2.6" height="2" fill="#c03048"/></g><rect x="740" y="281" width="1" height="20" fill="rgba(0,240,120,0.24750000000000003)"/><rect x="750" y="281" width="1" height="20" fill="rgba(0,240,120,0.24750000000000003)"/><rect x="755" y="281" width="1" height="20" fill="rgba(0,240,120,0.11000000000000001)"/><rect x="741.2" y="278" width="4.1" height="7.8" fill="#000"/><rect x="742.2" y="279" width="2.1" height="5.8" fill="#8080f0"/><g shape-rendering="geometricPrecision"><rect x="738.1" y="278" width="1.8" height="2" fill="#e8507c"/><rect x="745.4" y="278" width="0.9" height="2" fill="#ff8000"/><rect x="746.3" y="278" width="1.5" height="2" fill="#b01030"/><rect x="747.9" y="278" width="2.1" height="3.7" fill="#ff54c8"/><rect x="751" y="278" width="1.7" height="2" fill="#d02090"/><rect x="752.7" y="278" width="2.6" height="2" fill="#c03048"/></g><rect x="758" y="281" width="1" height="20" fill="rgba(0,240,120,0.24750000000000003)"/><rect x="768" y="281" width="1" height="20" fill="rgba(0,240,120,0.24750000000000003)"/><rect x="773" y="281" width="1" height="20" fill="rgba(0,240,120,0.11000000000000001)"/><rect x="762" y="281" width="1" height="20" fill="rgba(0,240,120,0.24750000000000003)"/><rect x="759.2" y="278" width="3.3" height="6" fill="#000"/><rect x="760.2" y="279" width="1.3" height="4" fill="#8080f0"/><g shape-rendering="geometricPrecision"><rect x="756.1" y="278" width="1.8" height="2" fill="#e8507c"/><rect x="763.4" y="278" width="0.9" height="2" fill="#ff8000"/><rect x="764.3" y="278" width="1.5" height="2" fill="#b01030"/><rect x="765.9" y="278" width="2.1" height="3.7" fill="#ff54c8"/><rect x="769" y="278" width="1.7" height="2" fill="#d02090"/><rect x="770.7" y="278" width="2.6" height="2" fill="#c03048"/></g><rect x="776" y="281" width="1" height="20" fill="rgba(0,240,120,0.24750000000000003)"/><rect x="786" y="281" width="1" height="20" fill="rgba(0,240,120,0.24750000000000003)"/><rect x="791" y="281" width="1" height="20" fill="rgba(0,240,120,0.11000000000000001)"/><rect x="780" y="281" width="1" height="20" fill="rgba(0,240,120,0.24750000000000003)"/><rect x="777.2" y="278" width="3.3" height="6" fill="#000"/><rect x="778.2" y="279" width="1.3" height="4" fill="#8080f0"/><g shape-rendering="geometricPrecision"><rect x="774.1" y="278" width="1.8" height="2" fill="#e8507c"/><rect x="781.4" y="278" width="0.9" height="2" fill="#ff8000"/><rect x="782.3" y="278" width="1.5" height="2" fill="#b01030"/><rect x="783.9" y="278" width="2.1" height="3.7" fill="#ff54c8"/><rect x="787" y="278" width="1.7" height="2" fill="#d02090"/><rect x="788.7" y="278" width="2.6" height="2" fill="#c03048"/></g><rect x="794" y="281" width="1" height="20" fill="rgba(0,240,120,0.24750000000000003)"/><rect x="804" y="281" width="1" height="20" fill="rgba(0,240,120,0.24750000000000003)"/><rect x="809" y="281" width="1" height="20" fill="rgba(0,240,120,0.11000000000000001)"/><rect x="794.6" y="278" width="4.1" height="7.8" fill="#000"/><rect x="795.6" y="279" width="2.1" height="5.8" fill="#8080f0"/><rect x="801.1" y="278" width="3.4" height="6" fill="#000"/><rect x="802.1" y="279" width="1.4" height="4" fill="#8080f0"/><g shape-rendering="geometricPrecision"><rect x="792.1" y="278" width="1.8" height="2" fill="#e8507c"/><rect x="798.8" y="278" width="0.9" height="2" fill="#ff8000"/><rect x="799.7" y="278" width="1.5" height="2" fill="#b01030"/><rect x="804.6" y="278" width="1.2" height="2" fill="#ff8000"/><rect x="805.8" y="278" width="1.2" height="2" fill="#d02090"/><rect x="806.7" y="278" width="2.6" height="2" fill="#c03048"/></g><rect x="812" y="281" width="1" height="20" fill="rgba(0,240,120,0.24750000000000003)"/><rect x="822" y="281" width="1" height="20" fill="rgba(0,240,120,0.24750000000000003)"/><rect x="827" y="281" width="1" height="20" fill="rgba(0,240,120,0.11000000000000001)"/><rect x="812.6" y="278" width="4.1" height="7.8" fill="#000"/><rect x="813.6" y="279" width="2.1" height="5.8" fill="#8080f0"/><rect x="819.1" y="278" width="3.4" height="6" fill="#000"/><rect x="820.1" y="279" width="1.4" height="4" fill="#8080f0"/><g shape-rendering="geometricPrecision"><rect x="810.1" y="278" width="1.8" height="2" fill="#e8507c"/><rect x="816.8" y="278" width="0.9" height="2" fill="#ff8000"/><rect x="817.7" y="278" width="1.5" height="2" fill="#b01030"/><rect x="822.6" y="278" width="1.2" height="2" fill="#ff8000"/><rect x="823.8" y="278" width="1.2" height="2" fill="#d02090"/><rect x="824.7" y="278" width="2.6" height="2" fill="#c03048"/></g><rect x="830" y="281" width="1" height="20" fill="rgba(0,240,120,0.24750000000000003)"/><rect x="840" y="281" width="1" height="20" fill="rgba(0,240,120,0.24750000000000003)"/><rect x="845" y="281" width="1" height="20" fill="rgba(0,240,120,0.11000000000000001)"/><rect x="834" y="281" width="1" height="20" fill="rgba(0,240,120,0.24750000000000003)"/><rect x="830.6" y="278" width="3.3" height="6" fill="#000"/><rect x="831.6" y="279" width="1.3" height="4" fill="#8080f0"/><rect x="837.1" y="278" width="3.4" height="6" fill="#000"/><rect x="838.1" y="279" width="1.4" height="4" fill="#8080f0"/><g shape-rendering="geometricPrecision"><rect x="828.1" y="278" width="1.8" height="2" fill="#e8507c"/><rect x="834.8" y="278" width="0.9" height="2" fill="#ff8000"/><rect x="835.7" y="278" width="1.5" height="2" fill="#b01030"/><rect x="840.6" y="278" width="1.2" height="2" fill="#ff8000"/><rect x="841.8" y="278" width="1.2" height="2" fill="#d02090"/><rect x="842.7" y="278" width="2.6" height="2" fill="#c03048"/></g><rect x="848" y="281" width="1" height="20" fill="rgba(0,240,120,0.24750000000000003)"/><rect x="858" y="281" width="1" height="20" fill="rgba(0,240,120,0.24750000000000003)"/><rect x="863" y="281" width="1" height="20" fill="rgba(0,240,120,0.11000000000000001)"/><rect x="852" y="281" width="1" height="20" fill="rgba(0,240,120,0.24750000000000003)"/><rect x="848.6" y="278" width="3.3" height="6" fill="#000"/><rect x="849.6" y="279" width="1.3" height="4" fill="#8080f0"/><rect x="855.1" y="278" width="3.4" height="6" fill="#000"/><rect x="856.1" y="279" width="1.4" height="4" fill="#8080f0"/><g shape-rendering="geometricPrecision"><rect x="846.1" y="278" width="1.8" height="2" fill="#e8507c"/><rect x="852.8" y="278" width="0.9" height="2" fill="#ff8000"/><rect x="853.7" y="278" width="1.5" height="2" fill="#b01030"/><rect x="858.6" y="278" width="1.2" height="2" fill="#ff8000"/><rect x="859.8" y="278" width="1.2" height="2" fill="#d02090"/><rect x="860.7" y="278" width="2.6" height="2" fill="#c03048"/></g><rect x="866" y="281" width="1" height="20" fill="rgba(0,240,120,0.24750000000000003)"/><rect x="876" y="281" width="1" height="20" fill="rgba(0,240,120,0.24750000000000003)"/><rect x="881" y="281" width="1" height="20" fill="rgba(0,240,120,0.11000000000000001)"/><rect x="870" y="281" width="1" height="20" fill="rgba(0,240,120,0.24750000000000003)"/><rect x="866.6" y="278" width="3.3" height="6" fill="#000"/><rect x="867.6" y="279" width="1.3" height="4" fill="#8080f0"/><rect x="873.1" y="278" width="3.4" height="6" fill="#000"/><rect x="874.1" y="279" width="1.4" height="4" fill="#8080f0"/><g shape-rendering="geometricPrecision"><rect x="864.1" y="278" width="1.8" height="2" fill="#e8507c"/><rect x="870.8" y="278" width="0.9" height="2" fill="#ff8000"/><rect x="871.7" y="278" width="1.5" height="2" fill="#b01030"/><rect x="876.6" y="278" width="1.2" height="2" fill="#ff8000"/><rect x="877.8" y="278" width="1.2" height="2" fill="#d02090"/><rect x="878.7" y="278" width="2.6" height="2" fill="#c03048"/></g><rect x="884" y="281" width="1" height="20" fill="rgba(0,240,120,0.24750000000000003)"/><rect x="894" y="281" width="1" height="20" fill="rgba(0,240,120,0.24750000000000003)"/><rect x="899" y="281" width="1" height="20" fill="rgba(0,240,120,0.11000000000000001)"/><rect x="884.6" y="278" width="4.1" height="7.8" fill="#000"/><rect x="885.6" y="279" width="2.1" height="5.8" fill="#8080f0"/><rect x="891.1" y="278" width="3.4" height="6" fill="#000"/><rect x="892.1" y="279" width="1.4" height="4" fill="#8080f0"/><g shape-rendering="geometricPrecision"><rect x="882.1" y="278" width="1.8" height="2" fill="#e8507c"/><rect x="888.8" y="278" width="0.9" height="2" fill="#ff8000"/><rect x="889.7" y="278" width="1.5" height="2" fill="#b01030"/><rect x="894.6" y="278" width="1.2" height="2" fill="#ff8000"/><rect x="895.8" y="278" width="1.2" height="2" fill="#d02090"/><rect x="896.7" y="278" width="2.6" height="2" fill="#c03048"/></g><rect x="902" y="281" width="1" height="20" fill="rgba(0,240,120,0.24750000000000003)"/><rect x="912" y="281" width="1" height="20" fill="rgba(0,240,120,0.24750000000000003)"/><rect x="917" y="281" width="1" height="20" fill="rgba(0,240,120,0.11000000000000001)"/><rect x="902.6" y="278" width="4.1" height="7.8" fill="#000"/><rect x="903.6" y="279" width="2.1" height="5.8" fill="#8080f0"/><rect x="909.1" y="278" width="3.4" height="6" fill="#000"/><rect x="910.1" y="279" width="1.4" height="4" fill="#8080f0"/><g shape-rendering="geometricPrecision"><rect x="900.1" y="278" width="1.8" height="2" fill="#e8507c"/><rect x="906.8" y="278" width="0.9" height="2" fill="#ff8000"/><rect x="907.7" y="278" width="1.5" height="2" fill="#b01030"/><rect x="912.6" y="278" width="1.2" height="2" fill="#ff8000"/><rect x="913.8" y="278" width="1.2" height="2" fill="#d02090"/><rect x="914.7" y="278" width="2.6" height="2" fill="#c03048"/></g><rect x="920" y="281" width="1" height="20" fill="rgba(0,240,120,0.24750000000000003)"/><rect x="930" y="281" width="1" height="20" fill="rgba(0,240,120,0.24750000000000003)"/><rect x="935" y="281" width="1" height="20" fill="rgba(0,240,120,0.11000000000000001)"/><rect x="924" y="281" width="1" height="20" fill="rgba(0,240,120,0.24750000000000003)"/><rect x="920.6" y="278" width="3.3" height="6" fill="#000"/><rect x="921.6" y="279" width="1.3" height="4" fill="#8080f0"/><rect x="927.1" y="278" width="3.4" height="6" fill="#000"/><rect x="928.1" y="279" width="1.4" height="4" fill="#8080f0"/><g shape-rendering="geometricPrecision"><rect x="918.1" y="278" width="1.8" height="2" fill="#e8507c"/><rect x="924.8" y="278" width="0.9" height="2" fill="#ff8000"/><rect x="925.7" y="278" width="1.5" height="2" fill="#b01030"/><rect x="930.6" y="278" width="1.2" height="2" fill="#ff8000"/><rect x="931.8" y="278" width="1.2" height="2" fill="#d02090"/><rect x="932.7" y="278" width="2.6" height="2" fill="#c03048"/></g><rect x="938" y="281" width="1" height="20" fill="rgba(0,240,120,0.24750000000000003)"/><rect x="948" y="281" width="1" height="20" fill="rgba(0,240,120,0.24750000000000003)"/><rect x="953" y="281" width="1" height="20" fill="rgba(0,240,120,0.11000000000000001)"/><rect x="938.6" y="278" width="4.1" height="7.8" fill="#000"/><rect x="939.6" y="279" width="2.1" height="5.8" fill="#8080f0"/><rect x="945.1" y="278" width="3.4" height="6" fill="#000"/><rect x="946.1" y="279" width="1.4" height="4" fill="#8080f0"/><g shape-rendering="geometricPrecision"><rect x="936.1" y="278" width="1.8" height="2" fill="#e8507c"/><rect x="942.8" y="278" width="0.9" height="2" fill="#ff8000"/><rect x="943.7" y="278" width="1.5" height="2" fill="#b01030"/><rect x="948.6" y="278" width="1.2" height="2" fill="#ff8000"/><rect x="949.8" y="278" width="1.2" height="2" fill="#d02090"/><rect x="950.7" y="278" width="2.6" height="2" fill="#c03048"/></g><rect x="956" y="281" width="1" height="20" fill="rgba(0,240,120,0.24750000000000003)"/><rect x="966" y="281" width="1" height="20" fill="rgba(0,240,120,0.24750000000000003)"/><rect x="971" y="281" width="1" height="20" fill="rgba(0,240,120,0.11000000000000001)"/><rect x="960" y="281" width="1" height="20" fill="rgba(0,240,120,0.24750000000000003)"/><rect x="956.6" y="278" width="3.3" height="6" fill="#000"/><rect x="957.6" y="279" width="1.3" height="4" fill="#8080f0"/><rect x="963.1" y="278" width="3.4" height="6" fill="#000"/><rect x="964.1" y="279" width="1.4" height="4" fill="#8080f0"/><g shape-rendering="geometricPrecision"><rect x="954.1" y="278" width="1.8" height="2" fill="#e8507c"/><rect x="960.8" y="278" width="0.9" height="2" fill="#ff8000"/><rect x="961.7" y="278" width="1.5" height="2" fill="#b01030"/><rect x="966.6" y="278" width="1.2" height="2" fill="#ff8000"/><rect x="967.8" y="278" width="1.2" height="2" fill="#d02090"/><rect x="968.7" y="278" width="2.6" height="2" fill="#c03048"/></g><rect x="974" y="281" width="1" height="20" fill="rgba(0,240,120,0.24750000000000003)"/><rect x="984" y="281" width="1" height="20" fill="rgba(0,240,120,0.24750000000000003)"/><rect x="989" y="281" width="1" height="20" fill="rgba(0,240,120,0.11000000000000001)"/><rect x="974.6" y="278" width="4.1" height="7.8" fill="#000"/><rect x="975.6" y="279" width="2.1" height="5.8" fill="#8080f0"/><rect x="981.1" y="278" width="3.4" height="6" fill="#000"/><rect x="982.1" y="279" width="1.4" height="4" fill="#8080f0"/><g shape-rendering="geometricPrecision"><rect x="972.1" y="278" width="1.8" height="2" fill="#e8507c"/><rect x="978.8" y="278" width="0.9" height="2" fill="#ff8000"/><rect x="979.7" y="278" width="1.5" height="2" fill="#b01030"/><rect x="984.6" y="278" width="1.2" height="2" fill="#ff8000"/><rect x="985.8" y="278" width="1.2" height="2" fill="#d02090"/><rect x="986.7" y="278" width="2.6" height="2" fill="#c03048"/></g><rect x="540" y="206" width="2" height="72" fill="#484848"/><rect x="542" y="206" width="1" height="72" fill="#989898"/><rect x="539.7" y="206" width="1.3" height="1.6" fill="#ff6088"/><rect x="558" y="206" width="2" height="72" fill="#3a3a3a"/><rect x="560" y="206" width="1" height="72" fill="#989898"/><g shape-rendering="geometricPrecision"><rect x="558.2" y="278" width="1.5" height="23.5" fill="#3c3c3c"/><rect x="559.7" y="278" width="0.6" height="23.5" fill="#9a9a9a"/></g><rect x="557.7" y="206" width="1.3" height="1.6" fill="#ff6088"/><rect x="555.9" y="278" width="1.3" height="23.5" fill="#484848"/><rect x="576" y="206" width="2" height="72" fill="#3a3a3a"/><rect x="578" y="206" width="1" height="72" fill="#989898"/><g shape-rendering="geometricPrecision"><rect x="576.2" y="278" width="1.5" height="23.5" fill="#3c3c3c"/><rect x="577.7" y="278" width="0.6" height="23.5" fill="#9a9a9a"/></g><rect x="575.7" y="206" width="1.3" height="1.6" fill="#ff6088"/><rect x="573.9" y="278" width="1.3" height="23.5" fill="#484848"/><rect x="594" y="206" width="2" height="72" fill="#3a3a3a"/><rect x="596" y="206" width="1" height="72" fill="#989898"/><g shape-rendering="geometricPrecision"><rect x="594.2" y="278" width="1.5" height="23.5" fill="#3c3c3c"/><rect x="595.7" y="278" width="0.6" height="23.5" fill="#9a9a9a"/></g><rect x="593.7" y="206" width="1.3" height="1.6" fill="#ff6088"/><rect x="591.9" y="278" width="1.3" height="23.5" fill="#484848"/><rect x="612" y="206" width="2" height="72" fill="#3a3a3a"/><rect x="614" y="206" width="1" height="72" fill="#989898"/><g shape-rendering="geometricPrecision"><rect x="612.2" y="278" width="1.5" height="23.5" fill="#3c3c3c"/><rect x="613.7" y="278" width="0.6" height="23.5" fill="#9a9a9a"/></g><rect x="611.7" y="206" width="1.3" height="1.6" fill="#ff6088"/><rect x="609.9" y="278" width="1.3" height="23.5" fill="#484848"/><rect x="630" y="206" width="2" height="72" fill="#3a3a3a"/><rect x="632" y="206" width="1" height="72" fill="#989898"/><g shape-rendering="geometricPrecision"><rect x="630.2" y="278" width="1.5" height="23.5" fill="#3c3c3c"/><rect x="631.7" y="278" width="0.6" height="23.5" fill="#9a9a9a"/></g><rect x="629.7" y="206" width="1.3" height="1.6" fill="#ff6088"/><rect x="627.9" y="278" width="1.3" height="23.5" fill="#484848"/><rect x="648" y="206" width="2" height="72" fill="#3a3a3a"/><rect x="650" y="206" width="1" height="72" fill="#989898"/><g shape-rendering="geometricPrecision"><rect x="648.2" y="278" width="1.5" height="23.5" fill="#3c3c3c"/><rect x="649.7" y="278" width="0.6" height="23.5" fill="#9a9a9a"/></g><rect x="647.7" y="206" width="1.3" height="1.6" fill="#ff6088"/><rect x="645.9" y="278" width="1.3" height="23.5" fill="#484848"/><rect x="666" y="206" width="2" height="72" fill="#3a3a3a"/><rect x="668" y="206" width="1" height="72" fill="#989898"/><g shape-rendering="geometricPrecision"><rect x="666.2" y="278" width="1.5" height="23.5" fill="#3c3c3c"/><rect x="667.7" y="278" width="0.6" height="23.5" fill="#9a9a9a"/></g><rect x="665.7" y="206" width="1.3" height="1.6" fill="#ff6088"/><rect x="663.9" y="278" width="1.3" height="23.5" fill="#484848"/><rect x="684" y="206" width="2" height="72" fill="#3a3a3a"/><rect x="686" y="206" width="1" height="72" fill="#989898"/><g shape-rendering="geometricPrecision"><rect x="684.2" y="278" width="1.5" height="23.5" fill="#3c3c3c"/><rect x="685.7" y="278" width="0.6" height="23.5" fill="#9a9a9a"/></g><rect x="683.7" y="206" width="1.3" height="1.6" fill="#ff6088"/><rect x="681.9" y="278" width="1.3" height="23.5" fill="#484848"/><rect x="702" y="206" width="2" height="72" fill="#3a3a3a"/><rect x="704" y="206" width="1" height="72" fill="#989898"/><g shape-rendering="geometricPrecision"><rect x="702.2" y="278" width="1.5" height="23.5" fill="#3c3c3c"/><rect x="703.7" y="278" width="0.6" height="23.5" fill="#9a9a9a"/></g><rect x="701.7" y="206" width="1.3" height="1.6" fill="#ff6088"/><rect x="699.9" y="278" width="1.3" height="23.5" fill="#484848"/><rect x="720" y="206" width="2" height="72" fill="#3a3a3a"/><rect x="722" y="206" width="1" height="72" fill="#989898"/><g shape-rendering="geometricPrecision"><rect x="720.2" y="278" width="1.5" height="23.5" fill="#3c3c3c"/><rect x="721.7" y="278" width="0.6" height="23.5" fill="#9a9a9a"/></g><rect x="719.7" y="206" width="1.3" height="1.6" fill="#ff6088"/><rect x="717.9" y="278" width="1.3" height="23.5" fill="#484848"/><rect x="738" y="206" width="2" height="72" fill="#3a3a3a"/><rect x="740" y="206" width="1" height="72" fill="#989898"/><g shape-rendering="geometricPrecision"><rect x="738.2" y="278" width="1.5" height="23.5" fill="#3c3c3c"/><rect x="739.7" y="278" width="0.6" height="23.5" fill="#9a9a9a"/></g><rect x="737.7" y="206" width="1.3" height="1.6" fill="#ff6088"/><rect x="735.9" y="278" width="1.3" height="23.5" fill="#484848"/><rect x="756" y="206" width="2" height="72" fill="#3a3a3a"/><rect x="758" y="206" width="1" height="72" fill="#989898"/><g shape-rendering="geometricPrecision"><rect x="756.2" y="278" width="1.5" height="23.5" fill="#3c3c3c"/><rect x="757.7" y="278" width="0.6" height="23.5" fill="#9a9a9a"/></g><rect x="755.7" y="206" width="1.3" height="1.6" fill="#ff6088"/><rect x="753.9" y="278" width="1.3" height="23.5" fill="#484848"/><rect x="774" y="206" width="2" height="72" fill="#3a3a3a"/><rect x="776" y="206" width="1" height="72" fill="#989898"/><g shape-rendering="geometricPrecision"><rect x="774.2" y="278" width="1.5" height="23.5" fill="#3c3c3c"/><rect x="775.7" y="278" width="0.6" height="23.5" fill="#9a9a9a"/></g><rect x="773.7" y="206" width="1.3" height="1.6" fill="#ff6088"/><rect x="771.9" y="278" width="1.3" height="23.5" fill="#484848"/><rect x="792" y="206" width="2" height="72" fill="#3a3a3a"/><rect x="794" y="206" width="1" height="72" fill="#989898"/><g shape-rendering="geometricPrecision"><rect x="792.2" y="278" width="1.5" height="23.5" fill="#3c3c3c"/><rect x="793.7" y="278" width="0.6" height="23.5" fill="#9a9a9a"/></g><rect x="791.7" y="206" width="1.3" height="1.6" fill="#ff6088"/><rect x="789.9" y="278" width="1.3" height="23.5" fill="#484848"/><rect x="810" y="206" width="2" height="72" fill="#3a3a3a"/><rect x="812" y="206" width="1" height="72" fill="#989898"/><g shape-rendering="geometricPrecision"><rect x="810.2" y="278" width="1.5" height="23.5" fill="#3c3c3c"/><rect x="811.7" y="278" width="0.6" height="23.5" fill="#9a9a9a"/></g><rect x="809.7" y="206" width="1.3" height="1.6" fill="#ff6088"/><rect x="807.9" y="278" width="1.3" height="23.5" fill="#484848"/><rect x="828" y="206" width="2" height="72" fill="#3a3a3a"/><rect x="830" y="206" width="1" height="72" fill="#989898"/><g shape-rendering="geometricPrecision"><rect x="828.2" y="278" width="1.5" height="23.5" fill="#3c3c3c"/><rect x="829.7" y="278" width="0.6" height="23.5" fill="#9a9a9a"/></g><rect x="827.7" y="206" width="1.3" height="1.6" fill="#ff6088"/><rect x="825.9" y="278" width="1.3" height="23.5" fill="#484848"/><rect x="846" y="206" width="2" height="72" fill="#3a3a3a"/><rect x="848" y="206" width="1" height="72" fill="#989898"/><g shape-rendering="geometricPrecision"><rect x="846.2" y="278" width="1.5" height="23.5" fill="#3c3c3c"/><rect x="847.7" y="278" width="0.6" height="23.5" fill="#9a9a9a"/></g><rect x="845.7" y="206" width="1.3" height="1.6" fill="#ff6088"/><rect x="843.9" y="278" width="1.3" height="23.5" fill="#484848"/><rect x="864" y="206" width="2" height="72" fill="#3a3a3a"/><rect x="866" y="206" width="1" height="72" fill="#989898"/><g shape-rendering="geometricPrecision"><rect x="864.2" y="278" width="1.5" height="23.5" fill="#3c3c3c"/><rect x="865.7" y="278" width="0.6" height="23.5" fill="#9a9a9a"/></g><rect x="863.7" y="206" width="1.3" height="1.6" fill="#ff6088"/><rect x="861.9" y="278" width="1.3" height="23.5" fill="#484848"/><rect x="882" y="206" width="2" height="72" fill="#3a3a3a"/><rect x="884" y="206" width="1" height="72" fill="#989898"/><g shape-rendering="geometricPrecision"><rect x="882.2" y="278" width="1.5" height="23.5" fill="#3c3c3c"/><rect x="883.7" y="278" width="0.6" height="23.5" fill="#9a9a9a"/></g><rect x="881.7" y="206" width="1.3" height="1.6" fill="#ff6088"/><rect x="879.9" y="278" width="1.3" height="23.5" fill="#484848"/><rect x="900" y="206" width="2" height="72" fill="#3a3a3a"/><rect x="902" y="206" width="1" height="72" fill="#989898"/><g shape-rendering="geometricPrecision"><rect x="900.2" y="278" width="1.5" height="23.5" fill="#3c3c3c"/><rect x="901.7" y="278" width="0.6" height="23.5" fill="#9a9a9a"/></g><rect x="899.7" y="206" width="1.3" height="1.6" fill="#ff6088"/><rect x="897.9" y="278" width="1.3" height="23.5" fill="#484848"/><rect x="918" y="206" width="2" height="72" fill="#3a3a3a"/><rect x="920" y="206" width="1" height="72" fill="#989898"/><g shape-rendering="geometricPrecision"><rect x="918.2" y="278" width="1.5" height="23.5" fill="#3c3c3c"/><rect x="919.7" y="278" width="0.6" height="23.5" fill="#9a9a9a"/></g><rect x="917.7" y="206" width="1.3" height="1.6" fill="#ff6088"/><rect x="915.9" y="278" width="1.3" height="23.5" fill="#484848"/><rect x="936" y="206" width="2" height="72" fill="#3a3a3a"/><rect x="938" y="206" width="1" height="72" fill="#989898"/><g shape-rendering="geometricPrecision"><rect x="936.2" y="278" width="1.5" height="23.5" fill="#3c3c3c"/><rect x="937.7" y="278" width="0.6" height="23.5" fill="#9a9a9a"/></g><rect x="935.7" y="206" width="1.3" height="1.6" fill="#ff6088"/><rect x="933.9" y="278" width="1.3" height="23.5" fill="#484848"/><rect x="954" y="206" width="2" height="72" fill="#3a3a3a"/><rect x="956" y="206" width="1" height="72" fill="#989898"/><g shape-rendering="geometricPrecision"><rect x="954.2" y="278" width="1.5" height="23.5" fill="#3c3c3c"/><rect x="955.7" y="278" width="0.6" height="23.5" fill="#9a9a9a"/></g><rect x="953.7" y="206" width="1.3" height="1.6" fill="#ff6088"/><rect x="951.9" y="278" width="1.3" height="23.5" fill="#484848"/><rect x="972" y="206" width="2" height="72" fill="#3a3a3a"/><rect x="974" y="206" width="1" height="72" fill="#989898"/><g shape-rendering="geometricPrecision"><rect x="972.2" y="278" width="1.5" height="23.5" fill="#3c3c3c"/><rect x="973.7" y="278" width="0.6" height="23.5" fill="#9a9a9a"/></g><rect x="971.7" y="206" width="1.3" height="1.6" fill="#ff6088"/><rect x="969.9" y="278" width="1.3" height="23.5" fill="#484848"/><rect x="540" y="301" width="446" height="1.4" fill="#00e000"/><rect x="555" y="325" width="445" height="1.4" fill="#00e000"/><rect x="556" y="301" width="1.5" height="3.2" fill="#00e000"/><rect x="557" y="304" width="1" height="21" fill="rgba(0,240,120,0.55)"/><g shape-rendering="geometricPrecision"><rect x="573.7" y="301" width="1.9" height="4.8" fill="#00e000"/></g><rect x="574" y="306" width="1" height="19" fill="rgba(0,240,120,0.16)"/><g shape-rendering="geometricPrecision"><rect x="591.7" y="301" width="1.9" height="4.8" fill="#00e000"/></g><rect x="592" y="306" width="1" height="19" fill="rgba(0,240,120,0.16)"/><g shape-rendering="geometricPrecision"><rect x="609.7" y="301" width="1.9" height="4.8" fill="#00e000"/></g><rect x="610" y="306" width="1" height="19" fill="rgba(0,240,120,0.16)"/><g shape-rendering="geometricPrecision"><rect x="627.7" y="301" width="1.9" height="4.8" fill="#00e000"/></g><rect x="628" y="306" width="1" height="19" fill="rgba(0,240,120,0.16)"/><g shape-rendering="geometricPrecision"><rect x="645.7" y="301" width="1.9" height="4.8" fill="#00e000"/></g><rect x="646" y="306" width="1" height="19" fill="rgba(0,240,120,0.16)"/><g shape-rendering="geometricPrecision"><rect x="663.7" y="301" width="1.9" height="4.8" fill="#00e000"/></g><rect x="664" y="306" width="1" height="19" fill="rgba(0,240,120,0.16)"/><g shape-rendering="geometricPrecision"><rect x="681.7" y="301" width="1.9" height="4.8" fill="#00e000"/></g><rect x="682" y="306" width="1" height="19" fill="rgba(0,240,120,0.16)"/><g shape-rendering="geometricPrecision"><rect x="699.7" y="301" width="1.9" height="4.8" fill="#00e000"/></g><rect x="700" y="306" width="1" height="19" fill="rgba(0,240,120,0.16)"/><g shape-rendering="geometricPrecision"><rect x="717.7" y="301" width="1.9" height="4.8" fill="#00e000"/></g><rect x="718" y="306" width="1" height="19" fill="rgba(0,240,120,0.16)"/><g shape-rendering="geometricPrecision"><rect x="735.7" y="301" width="1.9" height="4.8" fill="#00e000"/></g><rect x="736" y="306" width="1" height="19" fill="rgba(0,240,120,0.16)"/><g shape-rendering="geometricPrecision"><rect x="753.7" y="301" width="1.9" height="4.8" fill="#00e000"/></g><rect x="754" y="306" width="1" height="19" fill="rgba(0,240,120,0.16)"/><g shape-rendering="geometricPrecision"><rect x="771.7" y="301" width="1.9" height="4.8" fill="#00e000"/></g><rect x="772" y="306" width="1" height="19" fill="rgba(0,240,120,0.16)"/><g shape-rendering="geometricPrecision"><rect x="789.7" y="301" width="1.9" height="4.8" fill="#00e000"/></g><rect x="790" y="306" width="1" height="19" fill="rgba(0,240,120,0.16)"/><g shape-rendering="geometricPrecision"><rect x="807.7" y="301" width="1.9" height="4.8" fill="#00e000"/></g><rect x="808" y="306" width="1" height="19" fill="rgba(0,240,120,0.16)"/><g shape-rendering="geometricPrecision"><rect x="825.7" y="301" width="1.9" height="4.8" fill="#00e000"/></g><rect x="826" y="306" width="1" height="19" fill="rgba(0,240,120,0.16)"/><g shape-rendering="geometricPrecision"><rect x="843.7" y="301" width="1.9" height="4.8" fill="#00e000"/></g><rect x="844" y="306" width="1" height="19" fill="rgba(0,240,120,0.16)"/><g shape-rendering="geometricPrecision"><rect x="861.7" y="301" width="1.9" height="4.8" fill="#00e000"/></g><rect x="862" y="306" width="1" height="19" fill="rgba(0,240,120,0.16)"/><g shape-rendering="geometricPrecision"><rect x="879.7" y="301" width="1.9" height="4.8" fill="#00e000"/></g><rect x="880" y="306" width="1" height="19" fill="rgba(0,240,120,0.16)"/><g shape-rendering="geometricPrecision"><rect x="897.7" y="301" width="1.9" height="4.8" fill="#00e000"/></g><rect x="898" y="306" width="1" height="19" fill="rgba(0,240,120,0.16)"/><g shape-rendering="geometricPrecision"><rect x="915.7" y="301" width="1.9" height="4.8" fill="#00e000"/></g><rect x="916" y="306" width="1" height="19" fill="rgba(0,240,120,0.16)"/><g shape-rendering="geometricPrecision"><rect x="933.7" y="301" width="1.9" height="4.8" fill="#00e000"/></g><rect x="934" y="306" width="1" height="19" fill="rgba(0,240,120,0.16)"/><rect x="950.7" y="302" width="3.4" height="5.6" fill="#000"/><rect x="951.7" y="303" width="1.4" height="3.6" fill="#00a800"/><rect x="952" y="307" width="1" height="18" fill="rgba(0,240,120,0.16)"/><rect x="968.7" y="302" width="3.4" height="5.6" fill="#000"/><rect x="969.7" y="303" width="1.4" height="3.6" fill="#00a800"/><rect x="970" y="307" width="1" height="18" fill="rgba(0,240,120,0.16)"/><rect x="986.3" y="278" width="11" height="21.5" fill="#000"/><rect x="987.3" y="279" width="9" height="19.5" fill="#ff64c4"/><text x="992" y="288.5" class="bm">I</text><text x="992" y="299.4" class="bm" clip-path="url(#cpB)">S</text><rect x="997" y="300" width="1" height="25" fill="rgba(0,240,120,0.6)"/><rect x="998.2" y="302" width="753.3" height="24" fill="#000"/><rect x="999.8" y="303" width="9.9" height="22" fill="#8080f0"/><rect x="1011.7" y="303" width="7.6" height="22" fill="#00fa80"/><rect x="1020.9" y="303" width="10.3" height="22" fill="#8080f0"/><rect x="1032.8" y="303" width="3.9" height="22" fill="#00fa80"/><rect x="1037.1" y="302" width="0.9" height="24" fill="#b4b4b4"/><text x="1004.4" y="313" class="bl">S</text><text x="1004.4" y="323.2" class="bl">R</text><text x="1025.9" y="313" class="bl">D</text><text x="1025.9" y="323.2" class="bl">R</text><rect x="997.7" y="302" width="1.3" height="2" fill="#ff7a00"/><rect x="1039.5" y="303" width="9.9" height="22" fill="#8080f0"/><rect x="1051.4" y="303" width="7.6" height="22" fill="#00fa80"/><rect x="1060.6" y="303" width="10.3" height="22" fill="#8080f0"/><rect x="1072.5" y="303" width="3.9" height="22" fill="#00fa80"/><rect x="1076.8" y="302" width="0.9" height="24" fill="#b4b4b4"/><text x="1044.1" y="313" class="bl">S</text><text x="1044.1" y="323.2" class="bl">R</text><text x="1065.6" y="313" class="bl">D</text><text x="1065.6" y="323.2" class="bl">R</text><rect x="1037.4" y="302" width="1.3" height="2" fill="#ff7a00"/><rect x="1079.2" y="303" width="9.9" height="22" fill="#8080f0"/><rect x="1091.1" y="303" width="7.6" height="22" fill="#00fa80"/><rect x="1100.3" y="303" width="10.3" height="22" fill="#8080f0"/><rect x="1112.2" y="303" width="3.9" height="22" fill="#00fa80"/><rect x="1116.5" y="302" width="0.9" height="24" fill="#b4b4b4"/><text x="1083.8" y="313" class="bl">S</text><text x="1083.8" y="323.2" class="bl">R</text><text x="1105.3" y="313" class="bl">D</text><text x="1105.3" y="323.2" class="bl">R</text><rect x="1077.1" y="302" width="1.3" height="2" fill="#ff7a00"/><rect x="1118.9" y="303" width="9.9" height="22" fill="#8080f0"/><rect x="1130.8" y="303" width="7.6" height="22" fill="#00fa80"/><rect x="1140" y="303" width="10.3" height="22" fill="#8080f0"/><rect x="1151.9" y="303" width="3.9" height="22" fill="#00fa80"/><rect x="1156.2" y="302" width="0.9" height="24" fill="#b4b4b4"/><text x="1123.5" y="313" class="bl">S</text><text x="1123.5" y="323.2" class="bl">R</text><text x="1145" y="313" class="bl">D</text><text x="1145" y="323.2" class="bl">R</text><rect x="1116.8" y="302" width="1.3" height="2" fill="#ff7a00"/><rect x="1158.6" y="303" width="9.9" height="22" fill="#8080f0"/><rect x="1170.5" y="303" width="7.6" height="22" fill="#00fa80"/><rect x="1179.7" y="303" width="10.3" height="22" fill="#8080f0"/><rect x="1191.6" y="303" width="3.9" height="22" fill="#00fa80"/><rect x="1195.9" y="302" width="0.9" height="24" fill="#b4b4b4"/><text x="1163.2" y="313" class="bl">S</text><text x="1163.2" y="323.2" class="bl">R</text><text x="1184.7" y="313" class="bl">D</text><text x="1184.7" y="323.2" class="bl">R</text><rect x="1156.5" y="302" width="1.3" height="2" fill="#ff7a00"/><rect x="1198.3" y="303" width="9.9" height="22" fill="#8080f0"/><rect x="1210.2" y="303" width="7.6" height="22" fill="#00fa80"/><rect x="1219.4" y="303" width="10.3" height="22" fill="#8080f0"/><rect x="1231.3" y="303" width="3.9" height="22" fill="#00fa80"/><rect x="1235.6" y="302" width="0.9" height="24" fill="#b4b4b4"/><text x="1202.9" y="313" class="bl">S</text><text x="1202.9" y="323.2" class="bl">R</text><text x="1224.4" y="313" class="bl">D</text><text x="1224.4" y="323.2" class="bl">R</text><rect x="1196.2" y="302" width="1.3" height="2" fill="#ff7a00"/><rect x="1238" y="303" width="9.9" height="22" fill="#8080f0"/><rect x="1249.9" y="303" width="7.6" height="22" fill="#00fa80"/><rect x="1259.1" y="303" width="10.3" height="22" fill="#8080f0"/><rect x="1271" y="303" width="3.9" height="22" fill="#00fa80"/><rect x="1275.3" y="302" width="0.9" height="24" fill="#b4b4b4"/><text x="1242.6" y="313" class="bl">S</text><text x="1242.6" y="323.2" class="bl">R</text><text x="1264.1" y="313" class="bl">D</text><text x="1264.1" y="323.2" class="bl">R</text><rect x="1235.9" y="302" width="1.3" height="2" fill="#ff7a00"/><rect x="1277.7" y="303" width="9.9" height="22" fill="#8080f0"/><rect x="1289.6" y="303" width="7.6" height="22" fill="#00fa80"/><rect x="1298.8" y="303" width="10.3" height="22" fill="#8080f0"/><rect x="1310.7" y="303" width="3.9" height="22" fill="#00fa80"/><rect x="1315" y="302" width="0.9" height="24" fill="#b4b4b4"/><text x="1282.3" y="313" class="bl">S</text><text x="1282.3" y="323.2" class="bl">R</text><text x="1303.8" y="313" class="bl">D</text><text x="1303.8" y="323.2" class="bl">R</text><rect x="1275.6" y="302" width="1.3" height="2" fill="#ff7a00"/><rect x="1317.4" y="303" width="9.9" height="22" fill="#8080f0"/><rect x="1329.3" y="303" width="7.6" height="22" fill="#00fa80"/><rect x="1338.5" y="303" width="10.3" height="22" fill="#8080f0"/><rect x="1350.4" y="303" width="3.9" height="22" fill="#00fa80"/><rect x="1354.7" y="302" width="0.9" height="24" fill="#b4b4b4"/><text x="1322" y="313" class="bl">S</text><text x="1322" y="323.2" class="bl">R</text><text x="1343.5" y="313" class="bl">D</text><text x="1343.5" y="323.2" class="bl">R</text><rect x="1315.3" y="302" width="1.3" height="2" fill="#ff7a00"/><rect x="1357.1" y="303" width="9.9" height="22" fill="#8080f0"/><rect x="1369" y="303" width="7.6" height="22" fill="#00fa80"/><rect x="1378.2" y="303" width="10.3" height="22" fill="#8080f0"/><rect x="1390.1" y="303" width="3.9" height="22" fill="#00fa80"/><rect x="1394.4" y="302" width="0.9" height="24" fill="#b4b4b4"/><text x="1361.7" y="313" class="bl">S</text><text x="1361.7" y="323.2" class="bl">R</text><text x="1383.2" y="313" class="bl">D</text><text x="1383.2" y="323.2" class="bl">R</text><rect x="1355" y="302" width="1.3" height="2" fill="#ff7a00"/><rect x="1396.8" y="303" width="9.9" height="22" fill="#8080f0"/><rect x="1408.7" y="303" width="7.6" height="22" fill="#00fa80"/><rect x="1417.9" y="303" width="10.3" height="22" fill="#8080f0"/><rect x="1429.8" y="303" width="3.9" height="22" fill="#00fa80"/><rect x="1434.1" y="302" width="0.9" height="24" fill="#b4b4b4"/><text x="1401.4" y="313" class="bl">S</text><text x="1401.4" y="323.2" class="bl">R</text><text x="1422.9" y="313" class="bl">D</text><text x="1422.9" y="323.2" class="bl">R</text><rect x="1394.7" y="302" width="1.3" height="2" fill="#ff7a00"/><rect x="1436.5" y="303" width="9.9" height="22" fill="#8080f0"/><rect x="1448.4" y="303" width="7.6" height="22" fill="#00fa80"/><rect x="1457.6" y="303" width="10.3" height="22" fill="#8080f0"/><rect x="1469.5" y="303" width="3.9" height="22" fill="#00fa80"/><rect x="1473.8" y="302" width="0.9" height="24" fill="#b4b4b4"/><text x="1441.1" y="313" class="bl">S</text><text x="1441.1" y="323.2" class="bl">R</text><text x="1462.6" y="313" class="bl">D</text><text x="1462.6" y="323.2" class="bl">R</text><rect x="1434.4" y="302" width="1.3" height="2" fill="#ff7a00"/><rect x="1476.2" y="303" width="9.9" height="22" fill="#8080f0"/><rect x="1488.1" y="303" width="7.6" height="22" fill="#00fa80"/><rect x="1497.3" y="303" width="10.3" height="22" fill="#8080f0"/><rect x="1509.2" y="303" width="3.9" height="22" fill="#00fa80"/><rect x="1513.5" y="302" width="0.9" height="24" fill="#b4b4b4"/><text x="1480.8" y="313" class="bl">S</text><text x="1480.8" y="323.2" class="bl">R</text><text x="1502.3" y="313" class="bl">D</text><text x="1502.3" y="323.2" class="bl">R</text><rect x="1474.1" y="302" width="1.3" height="2" fill="#ff7a00"/><rect x="1515.9" y="303" width="9.9" height="22" fill="#8080f0"/><rect x="1527.8" y="303" width="7.6" height="22" fill="#00fa80"/><rect x="1537" y="303" width="10.3" height="22" fill="#8080f0"/><rect x="1548.9" y="303" width="3.9" height="22" fill="#00fa80"/><rect x="1553.2" y="302" width="0.9" height="24" fill="#b4b4b4"/><text x="1520.5" y="313" class="bl">S</text><text x="1520.5" y="323.2" class="bl">R</text><text x="1542" y="313" class="bl">D</text><text x="1542" y="323.2" class="bl">R</text><rect x="1513.8" y="302" width="1.3" height="2" fill="#ff7a00"/><rect x="1555.6" y="303" width="9.9" height="22" fill="#8080f0"/><rect x="1567.5" y="303" width="7.6" height="22" fill="#00fa80"/><rect x="1576.7" y="303" width="10.3" height="22" fill="#8080f0"/><rect x="1588.6" y="303" width="3.9" height="22" fill="#00fa80"/><rect x="1592.9" y="302" width="0.9" height="24" fill="#b4b4b4"/><text x="1560.2" y="313" class="bl">S</text><text x="1560.2" y="323.2" class="bl">R</text><text x="1581.7" y="313" class="bl">D</text><text x="1581.7" y="323.2" class="bl">R</text><rect x="1553.5" y="302" width="1.3" height="2" fill="#ff7a00"/><rect x="1595.3" y="303" width="9.9" height="22" fill="#8080f0"/><rect x="1607.2" y="303" width="7.6" height="22" fill="#00fa80"/><rect x="1616.4" y="303" width="10.3" height="22" fill="#8080f0"/><rect x="1628.3" y="303" width="3.9" height="22" fill="#00fa80"/><rect x="1632.6" y="302" width="0.9" height="24" fill="#b4b4b4"/><text x="1599.9" y="313" class="bl">S</text><text x="1599.9" y="323.2" class="bl">R</text><text x="1621.4" y="313" class="bl">D</text><text x="1621.4" y="323.2" class="bl">R</text><rect x="1593.2" y="302" width="1.3" height="2" fill="#ff7a00"/><rect x="1635" y="303" width="9.9" height="22" fill="#8080f0"/><rect x="1646.9" y="303" width="7.6" height="22" fill="#00fa80"/><rect x="1656.1" y="303" width="10.3" height="22" fill="#8080f0"/><rect x="1668" y="303" width="3.9" height="22" fill="#00fa80"/><rect x="1672.3" y="302" width="0.9" height="24" fill="#b4b4b4"/><text x="1639.6" y="313" class="bl">S</text><text x="1639.6" y="323.2" class="bl">R</text><text x="1661.1" y="313" class="bl">D</text><text x="1661.1" y="323.2" class="bl">R</text><rect x="1632.9" y="302" width="1.3" height="2" fill="#ff7a00"/><rect x="1674.7" y="303" width="9.9" height="22" fill="#8080f0"/><rect x="1686.6" y="303" width="7.6" height="22" fill="#00fa80"/><rect x="1695.8" y="303" width="10.3" height="22" fill="#8080f0"/><rect x="1707.7" y="303" width="3.9" height="22" fill="#00fa80"/><rect x="1712" y="302" width="0.9" height="24" fill="#b4b4b4"/><text x="1679.3" y="313" class="bl">S</text><text x="1679.3" y="323.2" class="bl">R</text><text x="1700.8" y="313" class="bl">D</text><text x="1700.8" y="323.2" class="bl">R</text><rect x="1672.6" y="302" width="1.3" height="2" fill="#ff7a00"/><rect x="1714.4" y="303" width="9.9" height="22" fill="#8080f0"/><rect x="1726.3" y="303" width="7.6" height="22" fill="#00fa80"/><rect x="1735.5" y="303" width="10.3" height="22" fill="#8080f0"/><rect x="1747.4" y="303" width="3.9" height="22" fill="#00fa80"/><text x="1719" y="313" class="bl">S</text><text x="1719" y="323.2" class="bl">R</text><text x="1740.5" y="313" class="bl">D</text><text x="1740.5" y="323.2" class="bl">R</text><rect x="1712.3" y="302" width="1.3" height="2" fill="#ff7a00"/><rect x="999" y="325" width="753" height="1.4" fill="#00e000"/><rect x="1753.4" y="169" width="1.6" height="234" fill="rgba(255,40,40,.72)"/><rect x="1753.4" y="254" width="1.6" height="48" fill="#9a1212"/></g><text x="998" y="130.6" class="cl" id="cl1" style="letter-spacing:-0.08px">NetXDuo App thread (24034D70)</text><text x="1754" y="130.6" class="cl" id="cl2" style="letter-spacing:-0.35px">Idle</text>
</svg>
</body></html>
